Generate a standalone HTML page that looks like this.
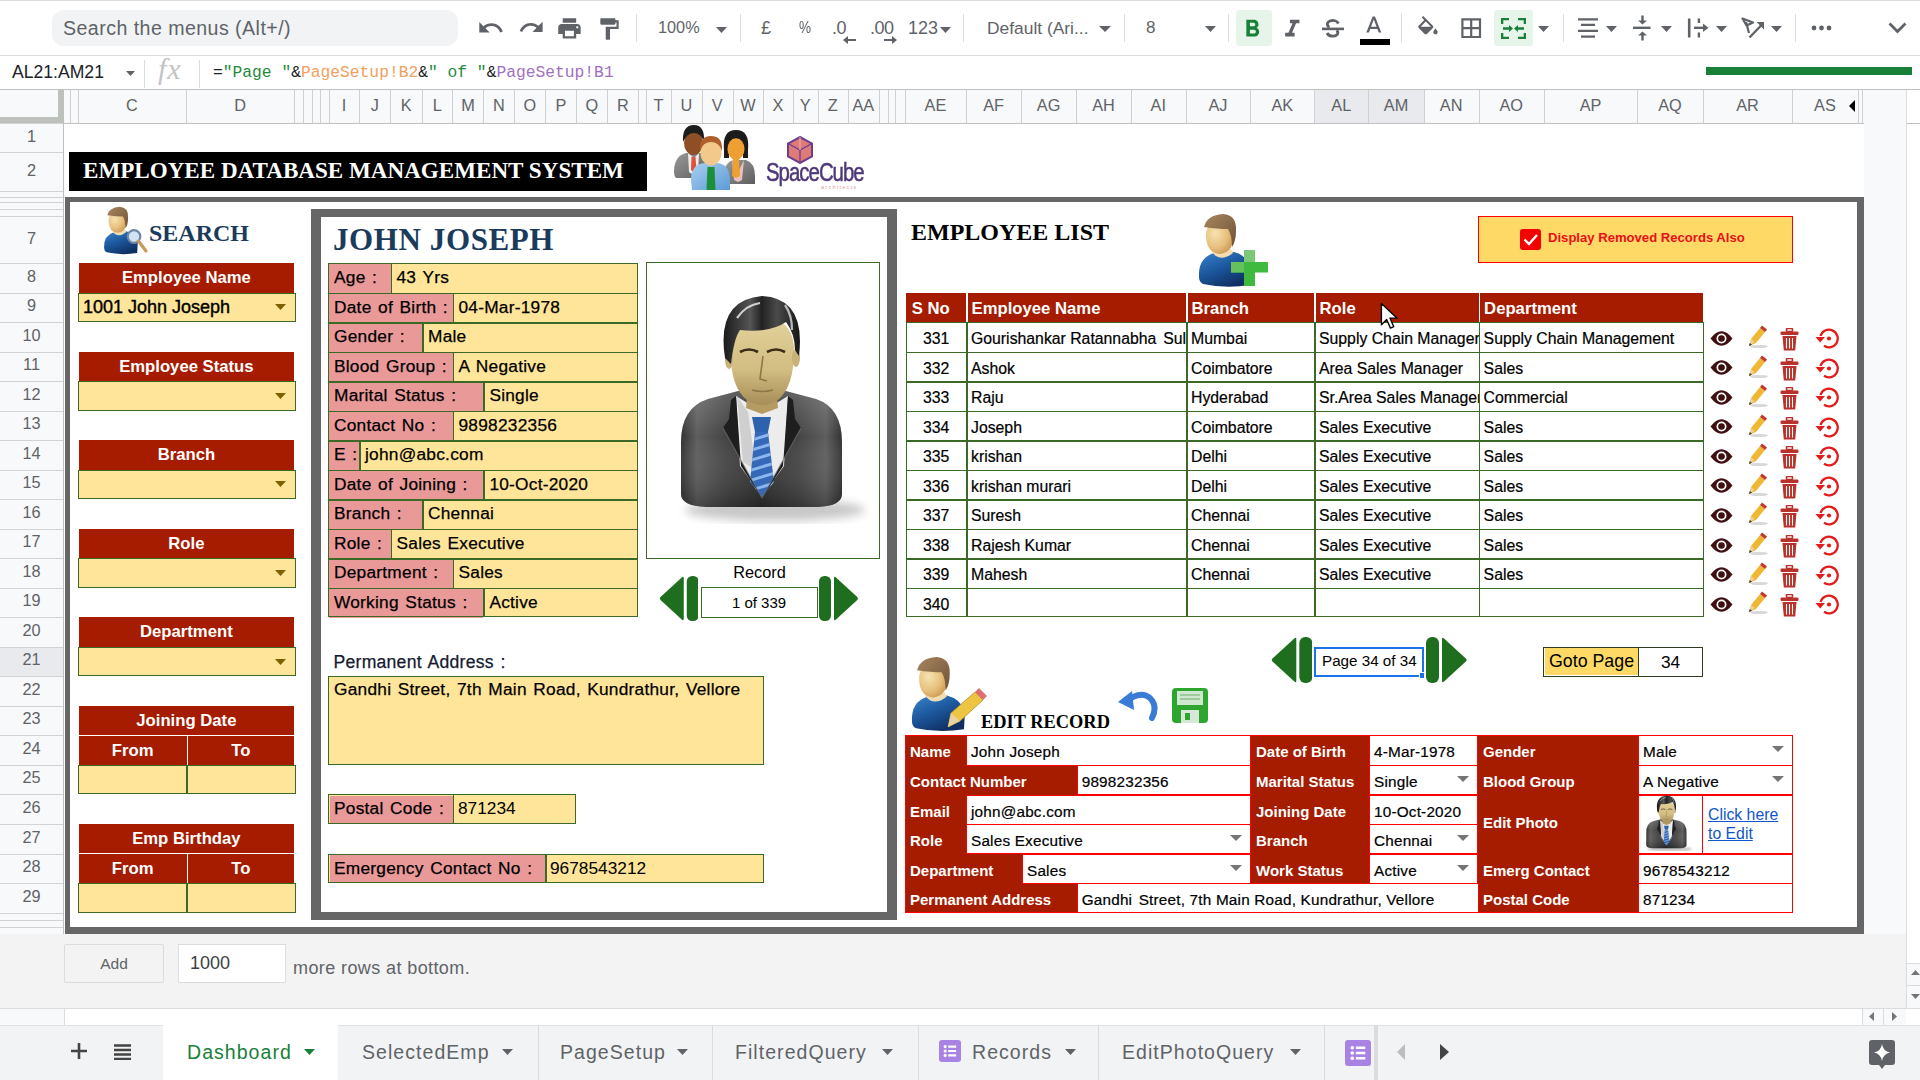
<!DOCTYPE html><html><head><meta charset="utf-8"><style>
html,body{margin:0;padding:0;}
body{width:1920px;height:1080px;overflow:hidden;position:relative;background:#fff;font-family:"Liberation Sans",sans-serif;color:#000;}
div,svg{position:absolute;box-sizing:border-box;}
.t{white-space:nowrap;overflow:visible;}
.serif{font-family:'Liberation Serif',serif;font-weight:bold;}
.mono{font-family:"Liberation Mono",monospace;}
</style></head><body>
<div style="left:0px;top:0px;width:1920px;height:1px;background:#dadce0"></div>
<div style="left:0px;top:55px;width:1920px;height:1px;background:#dadce0"></div>
<div style="left:52px;top:10px;width:406px;height:36px;background:#f1f3f4;border-radius:12px"></div>
<div class="t" style="left:63px;top:10px;height:36px;line-height:36px;font-size:19.6px;color:#5f6368;letter-spacing:0.45px">Search the menus (Alt+/)</div>
<svg style="left:477.2px;top:14px;width:27.599999999999998px;height:27.599999999999998px" viewBox="0 0 24 24"><path d="M12.5 8c-2.65 0-5.05.99-6.9 2.6L2 7v9h9l-3.62-3.62c1.39-1.16 3.16-1.88 5.12-1.88 3.54 0 6.55 2.31 7.6 5.5l2.37-.78C21.08 11.03 17.15 8 12.5 8z" fill="#5f6368" fill-rule="nonzero"/></svg>
<svg style="left:517.7px;top:14.3px;width:26.880000000000003px;height:26.880000000000003px" viewBox="0 0 24 24"><path d="M18.4 10.6C16.55 8.99 14.15 8 11.5 8c-4.65 0-8.58 3.03-9.96 7.22L3.9 16c1.05-3.19 4.05-5.5 7.6-5.5 1.95 0 3.73.72 5.12 1.88L13 16h9V7l-3.6 3.6z" fill="#5f6368" fill-rule="nonzero"/></svg>
<svg style="left:556.2px;top:15px;width:26.880000000000003px;height:26.880000000000003px" viewBox="0 0 24 24"><path d="M19 8H5c-1.66 0-3 1.34-3 3v6h4v4h12v-4h4v-6c0-1.66-1.34-3-3-3zm-3 11H8v-5h8v5zm3-7c-.55 0-1-.45-1-1s.45-1 1-1 1 .45 1 1-.45 1-1 1zm-1-9H6v4h12V3z" fill="#5f6368" fill-rule="nonzero"/></svg>
<svg style="left:596.4px;top:16.2px;width:25.92px;height:25.92px" viewBox="0 0 24 24"><path d="M18 4V3c0-.55-.45-1-1-1H5c-.55 0-1 .45-1 1v4c0 .55.45 1 1 1h12c.55 0 1-.45 1-1V6h1v4H9v11c0 .55.45 1 1 1h2c.55 0 1-.45 1-1v-9h8V4h-3z" fill="#5f6368" fill-rule="nonzero"/></svg>
<div style="left:636px;top:14px;width:1px;height:28px;background:#dadce0"></div>
<div style="left:740px;top:14px;width:1px;height:28px;background:#dadce0"></div>
<div style="left:963px;top:14px;width:1px;height:28px;background:#dadce0"></div>
<div style="left:1124px;top:14px;width:1px;height:28px;background:#dadce0"></div>
<div style="left:1228px;top:14px;width:1px;height:28px;background:#dadce0"></div>
<div style="left:1401px;top:14px;width:1px;height:28px;background:#dadce0"></div>
<div style="left:1563px;top:14px;width:1px;height:28px;background:#dadce0"></div>
<div style="left:1795px;top:14px;width:1px;height:28px;background:#dadce0"></div>
<div class="t" style="left:658px;top:8.5px;height:36px;line-height:36px;font-size:16.3px;color:#5f6368">100%</div>
<svg style="left:716px;top:27px;width:11px;height:6px" viewBox="0 0 11 6" width="11" height="6"><path d="M0 0 H11 L5.5 6 Z" fill="#5f6368"/></svg>
<div class="t" style="left:761px;top:10px;height:36px;line-height:36px;font-size:18px;color:#5f6368">£</div>
<div class="t" style="left:799px;top:10px;height:36px;line-height:36px;font-size:17px;color:#5f6368"><span style="display:inline-block;transform:scaleX(0.8);transform-origin:left">%</span></div>
<div class="t" style="left:832px;top:10px;height:36px;line-height:36px;font-size:18px;color:#5f6368;letter-spacing:-0.5px">.0</div>
<svg style="left:843px;top:36px;width:13px;height:8px" viewBox="0 0 13 8" width="13" height="8"><path d="M0 4 L5 0 V3 H13 V5 H5 V8 Z" fill="#5f6368"/></svg>
<div class="t" style="left:870px;top:10px;height:36px;line-height:36px;font-size:18px;color:#5f6368;letter-spacing:-0.5px">.00</div>
<svg style="left:884px;top:36px;width:13px;height:8px" viewBox="0 0 13 8" width="13" height="8"><path d="M13 4 L8 0 V3 H0 V5 H8 V8 Z" fill="#5f6368"/></svg>
<div class="t" style="left:908px;top:10px;height:36px;line-height:36px;font-size:18px;color:#5f6368">123</div>
<svg style="left:940px;top:27px;width:11px;height:6px" viewBox="0 0 11 6" width="11" height="6"><path d="M0 0 H11 L5.5 6 Z" fill="#5f6368"/></svg>
<div class="t" style="left:987px;top:10px;height:36px;line-height:36px;font-size:17.4px;color:#5f6368">Default (Ari...</div>
<svg style="left:1099px;top:26px;width:12px;height:6px" viewBox="0 0 12 6" width="12" height="6"><path d="M0 0 H12 L6.0 6 Z" fill="#5f6368"/></svg>
<div class="t" style="left:1146px;top:10px;height:36px;line-height:36px;font-size:17px;color:#5f6368">8</div>
<svg style="left:1205px;top:26px;width:11px;height:6px" viewBox="0 0 11 6" width="11" height="6"><path d="M0 0 H11 L5.5 6 Z" fill="#5f6368"/></svg>
<div style="left:1236px;top:10px;width:36px;height:36px;background:#e6f4ea;border-radius:3px"></div>
<svg style="left:1237.5px;top:15.3px;width:28.56px;height:28.56px" viewBox="0 0 24 24"><path d="M15.6 10.79c.97-.67 1.65-1.77 1.65-2.79 0-2.26-1.75-4-4-4H7v14h7.04c2.09 0 3.71-1.7 3.71-3.79 0-1.52-.86-2.82-2.15-3.42zM10 6.5h3c.83 0 1.5.67 1.5 1.5s-.67 1.5-1.5 1.5h-3v-3zm3.5 9H10v-3h3.5c.83 0 1.5.67 1.5 1.5s-.67 1.5-1.5 1.5z" fill="#188038" fill-rule="nonzero"/></svg>
<svg style="left:1277.8px;top:15.2px;width:28.56px;height:28.56px" viewBox="0 0 24 24"><path d="M10 4v3h2.21l-3.42 8H6v3h8v-3h-2.21l3.42-8H18V4z" fill="#5f6368" fill-rule="nonzero"/></svg>
<svg style="left:1322px;top:19px;width:22px;height:19px" viewBox="0 0 22 19" width="22" height="19"><path d="M16.5 4.5 C15 1.5 11 1 8 2 C4.5 3.2 4.5 7 7.5 8.2" stroke="#5f6368" stroke-width="2.8" fill="none"/><path d="M14.5 11.5 C17 13 16 17 11.5 17.2 C8 17.4 6 16 5 14" stroke="#5f6368" stroke-width="2.8" fill="none"/><rect x="0" y="8.6" width="22" height="2.6" fill="#5f6368"/></svg>
<svg style="left:1359.5px;top:13px;width:27.599999999999998px;height:27.599999999999998px" viewBox="0 0 24 24"><path d="M11 3L5.5 17h2.25l1.12-3h6.25l1.12 3h2.25L13 3h-2zm-1.38 9L12 5.67 14.38 12H9.62z" fill="#5f6368" fill-rule="nonzero"/></svg>
<div style="left:1360px;top:39.4px;width:30px;height:5.6px;background:#000"></div>
<svg style="left:1415px;top:16.2px;width:25.92px;height:25.92px" viewBox="0 0 24 24"><path d="M16.56 8.94L7.62 0 6.21 1.41l2.38 2.38-5.15 5.15c-.59.59-.59 1.54 0 2.12l5.5 5.5c.29.29.68.44 1.06.44s.77-.15 1.06-.44l5.5-5.5c.59-.58.59-1.53 0-2.12zM5.21 10L10 5.21 14.79 10H5.21zM19 11.5s-2 2.17-2 3.5c0 1.1.9 2 2 2s2-.9 2-2c0-1.33-2-3.5-2-3.5z" fill="#5f6368" fill-rule="nonzero"/></svg>
<svg style="left:1457.9px;top:14.6px;width:26.400000000000002px;height:26.400000000000002px" viewBox="0 0 24 24"><path d="M3 3v18h18V3H3zm8 16H5v-6h6v6zm0-8H5V5h6v6zm8 8h-6v-6h6v6zm0-8h-6V5h6v6z" fill="#5f6368" fill-rule="nonzero"/></svg>
<div style="left:1494px;top:10px;width:39px;height:36px;background:#e6f4ea;border-radius:3px"></div>
<svg style="left:1501px;top:18px;width:25px;height:21px" viewBox="0 0 25 21" width="25" height="21"><path d="M1 6 V1 H8 M17 1 H24 V6 M1 15 V20 H8 M17 20 H24 V15" stroke="#188038" stroke-width="2.6" fill="none"/><path d="M2 10.5 H9 M23 10.5 H16" stroke="#188038" stroke-width="2.4"/><path d="M12 10.5 L8 7 V14 Z M13 10.5 L17 7 V14 Z" fill="#188038"/></svg>
<svg style="left:1538px;top:26px;width:11px;height:6px" viewBox="0 0 11 6" width="11" height="6"><path d="M0 0 H11 L5.5 6 Z" fill="#5f6368"/></svg>
<svg style="left:1578px;top:17px;width:20px;height:22px" viewBox="0 0 20 22" width="20" height="22"><path d="M0 2.4 H20 M3 7.9 H17 M0 13.9 H20 M3 19.6 H17" stroke="#5f6368" stroke-width="2.4"/></svg>
<svg style="left:1606px;top:26px;width:11px;height:6px" viewBox="0 0 11 6" width="11" height="6"><path d="M0 0 H11 L5.5 6 Z" fill="#5f6368"/></svg>
<svg style="left:1633px;top:15px;width:19px;height:26px" viewBox="0 0 19 26" width="19" height="26"><path d="M0 12.8 H17.5" stroke="#5f6368" stroke-width="2.4"/><path d="M9.5 0.5 V6" stroke="#5f6368" stroke-width="2.4"/><path d="M5 5.5 H14 L9.5 9.5 Z" fill="#5f6368"/><path d="M9.5 25.5 V20" stroke="#5f6368" stroke-width="2.4"/><path d="M5 20.5 H14 L9.5 16.5 Z" fill="#5f6368"/></svg>
<svg style="left:1661px;top:26px;width:11px;height:6px" viewBox="0 0 11 6" width="11" height="6"><path d="M0 0 H11 L5.5 6 Z" fill="#5f6368"/></svg>
<svg style="left:1686px;top:18px;width:23px;height:20px" viewBox="0 0 23 20" width="23" height="20"><path d="M3.2 0.5 V19.5" stroke="#5f6368" stroke-width="2.6"/><path d="M12.9 0.5 V5 M12.9 14.5 V19.5" stroke="#5f6368" stroke-width="2.4"/><path d="M8 9.8 H19" stroke="#5f6368" stroke-width="2.4"/><path d="M17 5.5 L22.5 9.8 L17 14 Z" fill="#5f6368"/></svg>
<svg style="left:1716px;top:26px;width:11px;height:6px" viewBox="0 0 11 6" width="11" height="6"><path d="M0 0 H11 L5.5 6 Z" fill="#5f6368"/></svg>
<svg style="left:1741px;top:17px;width:24px;height:22px" viewBox="0 0 24 22" width="24" height="22"><path d="M1.5 1.5 L12 5.5 L5.5 8.5 Z M5 5 L8 16" stroke="#5f6368" stroke-width="2.2" fill="none" stroke-linejoin="round"/><path d="M8.5 20.5 L21 7.5" stroke="#5f6368" stroke-width="2.4"/><path d="M15.5 5 H23 V12.5 Z" fill="#5f6368"/></svg>
<svg style="left:1771px;top:26px;width:11px;height:6px" viewBox="0 0 11 6" width="11" height="6"><path d="M0 0 H11 L5.5 6 Z" fill="#5f6368"/></svg>
<svg style="left:1811px;top:25px;width:21px;height:6px" viewBox="0 0 21 6" width="21" height="6"><circle cx="3" cy="3" r="2.4" fill="#5f6368"/><circle cx="10.5" cy="3" r="2.4" fill="#5f6368"/><circle cx="18" cy="3" r="2.4" fill="#5f6368"/></svg>
<svg style="left:1888px;top:22px;width:19px;height:12px" viewBox="0 0 19 12" width="19" height="12"><path d="M1.5 1.5 L9.5 9.5 L17.5 1.5" stroke="#5f6368" stroke-width="2.8" fill="none"/></svg>
<div style="left:0px;top:89px;width:1920px;height:1px;background:#c0c0c0"></div>
<div class="t" style="left:12px;top:56px;height:33px;line-height:33px;font-size:17.6px;color:#202124">AL21:AM21</div>
<svg style="left:126px;top:71px;width:9px;height:5px" viewBox="0 0 9 5" width="9" height="5"><path d="M0 0 H9 L4.5 5 Z" fill="#5f6368"/></svg>
<div style="left:144px;top:60px;width:1px;height:28px;background:#dadce0"></div>
<div class="t" style="left:158px;top:52px;height:34px;line-height:34px;font-family:'Liberation Serif',serif;font-size:30px;color:#c4c4c4;letter-spacing:1px"><i>fx</i></div>
<div style="left:199px;top:60px;width:1px;height:28px;background:#dadce0"></div>
<div class="t" style="left:213px;top:56px;height:33px;line-height:33px;font-family:'Liberation Mono',monospace;font-size:16.3px"><span style="color:#202124">=</span><span style="color:#1e8b3a">"Page "</span><span style="color:#202124">&amp;</span><span style="color:#f0a060">PageSetup!B2</span><span style="color:#202124">&amp;</span><span style="color:#1e8b3a">" of "</span><span style="color:#202124">&amp;</span><span style="color:#a070c0">PageSetup!B1</span></div>
<div style="left:1706px;top:67px;width:206px;height:8px;background:#188038"></div>
<div style="left:0px;top:90px;width:1864px;height:33px;background:#f8f9fa"></div>
<div style="left:0px;top:123px;width:1864px;height:1px;background:#c0c0c0"></div>
<div style="left:1314.2px;top:90px;width:109.39999999999986px;height:33px;background:#e8eaed"></div>
<div style="left:70px;top:90px;width:1px;height:33px;background:#d0d0d0"></div>
<div style="left:78px;top:90px;width:1px;height:33px;background:#d0d0d0"></div>
<div style="left:186px;top:90px;width:1px;height:33px;background:#d0d0d0"></div>
<div style="left:294px;top:90px;width:1px;height:33px;background:#d0d0d0"></div>
<div style="left:303px;top:90px;width:1px;height:33px;background:#d0d0d0"></div>
<div style="left:312px;top:90px;width:1px;height:33px;background:#d0d0d0"></div>
<div style="left:320px;top:90px;width:1px;height:33px;background:#d0d0d0"></div>
<div style="left:329px;top:90px;width:1px;height:33px;background:#d0d0d0"></div>
<div style="left:359px;top:90px;width:1px;height:33px;background:#d0d0d0"></div>
<div style="left:390px;top:90px;width:1px;height:33px;background:#d0d0d0"></div>
<div style="left:422px;top:90px;width:1px;height:33px;background:#d0d0d0"></div>
<div style="left:452px;top:90px;width:1px;height:33px;background:#d0d0d0"></div>
<div style="left:483px;top:90px;width:1px;height:33px;background:#d0d0d0"></div>
<div style="left:514px;top:90px;width:1px;height:33px;background:#d0d0d0"></div>
<div style="left:545px;top:90px;width:1px;height:33px;background:#d0d0d0"></div>
<div style="left:576px;top:90px;width:1px;height:33px;background:#d0d0d0"></div>
<div style="left:607px;top:90px;width:1px;height:33px;background:#d0d0d0"></div>
<div style="left:638px;top:90px;width:1px;height:33px;background:#d0d0d0"></div>
<div style="left:646px;top:90px;width:1px;height:33px;background:#d0d0d0"></div>
<div style="left:671px;top:90px;width:1px;height:33px;background:#d0d0d0"></div>
<div style="left:702px;top:90px;width:1px;height:33px;background:#d0d0d0"></div>
<div style="left:733px;top:90px;width:1px;height:33px;background:#d0d0d0"></div>
<div style="left:763px;top:90px;width:1px;height:33px;background:#d0d0d0"></div>
<div style="left:793px;top:90px;width:1px;height:33px;background:#d0d0d0"></div>
<div style="left:818px;top:90px;width:1px;height:33px;background:#d0d0d0"></div>
<div style="left:848px;top:90px;width:1px;height:33px;background:#d0d0d0"></div>
<div style="left:879px;top:90px;width:1px;height:33px;background:#d0d0d0"></div>
<div style="left:888px;top:90px;width:1px;height:33px;background:#d0d0d0"></div>
<div style="left:895px;top:90px;width:1px;height:33px;background:#d0d0d0"></div>
<div style="left:905px;top:90px;width:1px;height:33px;background:#d0d0d0"></div>
<div style="left:966px;top:90px;width:1px;height:33px;background:#d0d0d0"></div>
<div style="left:1021px;top:90px;width:1px;height:33px;background:#d0d0d0"></div>
<div style="left:1076px;top:90px;width:1px;height:33px;background:#d0d0d0"></div>
<div style="left:1131px;top:90px;width:1px;height:33px;background:#d0d0d0"></div>
<div style="left:1186px;top:90px;width:1px;height:33px;background:#d0d0d0"></div>
<div style="left:1250px;top:90px;width:1px;height:33px;background:#d0d0d0"></div>
<div style="left:1314px;top:90px;width:1px;height:33px;background:#d0d0d0"></div>
<div style="left:1368px;top:90px;width:1px;height:33px;background:#d0d0d0"></div>
<div style="left:1424px;top:90px;width:1px;height:33px;background:#d0d0d0"></div>
<div style="left:1479px;top:90px;width:1px;height:33px;background:#d0d0d0"></div>
<div style="left:1544px;top:90px;width:1px;height:33px;background:#d0d0d0"></div>
<div style="left:1637px;top:90px;width:1px;height:33px;background:#d0d0d0"></div>
<div style="left:1703px;top:90px;width:1px;height:33px;background:#d0d0d0"></div>
<div style="left:1792px;top:90px;width:1px;height:33px;background:#d0d0d0"></div>
<div style="left:1858px;top:90px;width:1px;height:33px;background:#d0d0d0"></div>
<div style="left:1864px;top:90px;width:1px;height:33px;background:#d0d0d0"></div>
<div class="t" style="left:78px;top:88.5px;width:108px;height:33px;line-height:33px;text-align:center;font-size:16.3px;color:#5f6368">C</div>
<div class="t" style="left:186px;top:88.5px;width:108.5px;height:33px;line-height:33px;text-align:center;font-size:16.3px;color:#5f6368">D</div>
<div class="t" style="left:329px;top:88.5px;width:30px;height:33px;line-height:33px;text-align:center;font-size:16.3px;color:#5f6368">I</div>
<div class="t" style="left:359px;top:88.5px;width:31.5px;height:33px;line-height:33px;text-align:center;font-size:16.3px;color:#5f6368">J</div>
<div class="t" style="left:390.5px;top:88.5px;width:31.5px;height:33px;line-height:33px;text-align:center;font-size:16.3px;color:#5f6368">K</div>
<div class="t" style="left:422px;top:88.5px;width:30.5px;height:33px;line-height:33px;text-align:center;font-size:16.3px;color:#5f6368">L</div>
<div class="t" style="left:452.5px;top:88.5px;width:30.899999999999977px;height:33px;line-height:33px;text-align:center;font-size:16.3px;color:#5f6368">M</div>
<div class="t" style="left:483.4px;top:88.5px;width:30.800000000000068px;height:33px;line-height:33px;text-align:center;font-size:16.3px;color:#5f6368">N</div>
<div class="t" style="left:514.2px;top:88.5px;width:31.199999999999932px;height:33px;line-height:33px;text-align:center;font-size:16.3px;color:#5f6368">O</div>
<div class="t" style="left:545.4px;top:88.5px;width:31.0px;height:33px;line-height:33px;text-align:center;font-size:16.3px;color:#5f6368">P</div>
<div class="t" style="left:576.4px;top:88.5px;width:31.0px;height:33px;line-height:33px;text-align:center;font-size:16.3px;color:#5f6368">Q</div>
<div class="t" style="left:607.4px;top:88.5px;width:31.0px;height:33px;line-height:33px;text-align:center;font-size:16.3px;color:#5f6368">R</div>
<div class="t" style="left:646.2px;top:88.5px;width:24.799999999999955px;height:33px;line-height:33px;text-align:center;font-size:16.3px;color:#5f6368">T</div>
<div class="t" style="left:671px;top:88.5px;width:30.700000000000045px;height:33px;line-height:33px;text-align:center;font-size:16.3px;color:#5f6368">U</div>
<div class="t" style="left:701.7px;top:88.5px;width:31.0px;height:33px;line-height:33px;text-align:center;font-size:16.3px;color:#5f6368">V</div>
<div class="t" style="left:732.7px;top:88.5px;width:30.699999999999932px;height:33px;line-height:33px;text-align:center;font-size:16.3px;color:#5f6368">W</div>
<div class="t" style="left:763.4px;top:88.5px;width:29.200000000000045px;height:33px;line-height:33px;text-align:center;font-size:16.3px;color:#5f6368">X</div>
<div class="t" style="left:792.6px;top:88.5px;width:25.0px;height:33px;line-height:33px;text-align:center;font-size:16.3px;color:#5f6368">Y</div>
<div class="t" style="left:817.6px;top:88.5px;width:30.399999999999977px;height:33px;line-height:33px;text-align:center;font-size:16.3px;color:#5f6368">Z</div>
<div class="t" style="left:848px;top:88.5px;width:30.75px;height:33px;line-height:33px;text-align:center;font-size:16.3px;color:#5f6368">AA</div>
<div class="t" style="left:904.8px;top:88.5px;width:61.200000000000045px;height:33px;line-height:33px;text-align:center;font-size:16.3px;color:#5f6368">AE</div>
<div class="t" style="left:966px;top:88.5px;width:55.25px;height:33px;line-height:33px;text-align:center;font-size:16.3px;color:#5f6368">AF</div>
<div class="t" style="left:1021.25px;top:88.5px;width:54.75px;height:33px;line-height:33px;text-align:center;font-size:16.3px;color:#5f6368">AG</div>
<div class="t" style="left:1076px;top:88.5px;width:54.90000000000009px;height:33px;line-height:33px;text-align:center;font-size:16.3px;color:#5f6368">AH</div>
<div class="t" style="left:1130.9px;top:88.5px;width:54.69999999999982px;height:33px;line-height:33px;text-align:center;font-size:16.3px;color:#5f6368">AI</div>
<div class="t" style="left:1185.6px;top:88.5px;width:64.80000000000018px;height:33px;line-height:33px;text-align:center;font-size:16.3px;color:#5f6368">AJ</div>
<div class="t" style="left:1250.4px;top:88.5px;width:63.799999999999955px;height:33px;line-height:33px;text-align:center;font-size:16.3px;color:#5f6368">AK</div>
<div class="t" style="left:1314.2px;top:88.5px;width:54.200000000000045px;height:33px;line-height:33px;text-align:center;font-size:16.3px;color:#5f6368">AL</div>
<div class="t" style="left:1368.4px;top:88.5px;width:55.19999999999982px;height:33px;line-height:33px;text-align:center;font-size:16.3px;color:#5f6368">AM</div>
<div class="t" style="left:1423.6px;top:88.5px;width:55.0px;height:33px;line-height:33px;text-align:center;font-size:16.3px;color:#5f6368">AN</div>
<div class="t" style="left:1478.6px;top:88.5px;width:65.10000000000014px;height:33px;line-height:33px;text-align:center;font-size:16.3px;color:#5f6368">AO</div>
<div class="t" style="left:1543.7px;top:88.5px;width:93.70000000000005px;height:33px;line-height:33px;text-align:center;font-size:16.3px;color:#5f6368">AP</div>
<div class="t" style="left:1637.4px;top:88.5px;width:65.19999999999982px;height:33px;line-height:33px;text-align:center;font-size:16.3px;color:#5f6368">AQ</div>
<div class="t" style="left:1702.6px;top:88.5px;width:89.80000000000018px;height:33px;line-height:33px;text-align:center;font-size:16.3px;color:#5f6368">AR</div>
<div class="t" style="left:1792.4px;top:88.5px;width:65.09999999999991px;height:33px;line-height:33px;text-align:center;font-size:16.3px;color:#5f6368">AS</div>
<svg style="left:1849px;top:100px;width:6px;height:12px" viewBox="0 0 6 12" width="6" height="12"><path d="M6 0 V12 L0 6 Z" fill="#000"/></svg>
<div style="left:0px;top:90px;width:64px;height:33px;background:#f8f9fa"></div>
<div style="left:58px;top:90px;width:6px;height:33px;background:#bdc1bc"></div>
<div style="left:0px;top:117px;width:64px;height:6px;background:#bdc1bc"></div>
<div style="left:1864px;top:90px;width:42px;height:918px;background:#f8f9fa"></div>
<div style="left:1906px;top:90px;width:1px;height:918px;background:#dadce0"></div>
<div style="left:1862px;top:90px;width:1px;height:33px;background:#d0d0d0"></div>
<div style="left:1907px;top:123px;width:13px;height:1px;background:#c0c0c0"></div>
<div style="left:0px;top:123px;width:64px;height:811px;background:#f8f9fa"></div>
<div style="left:63px;top:123px;width:1px;height:811px;background:#c0c0c0"></div>
<div style="left:0px;top:646.851px;width:63px;height:29.527000000000044px;background:#e8eaed"></div>
<div style="left:0px;top:123px;width:63px;height:1px;background:#d3d3d3"></div>
<div style="left:0px;top:152px;width:63px;height:1px;background:#d3d3d3"></div>
<div style="left:0px;top:191px;width:63px;height:1px;background:#d3d3d3"></div>
<div style="left:0px;top:197px;width:63px;height:1px;background:#d3d3d3"></div>
<div style="left:0px;top:202px;width:63px;height:1px;background:#d3d3d3"></div>
<div style="left:0px;top:209px;width:63px;height:1px;background:#d3d3d3"></div>
<div style="left:0px;top:216px;width:63px;height:1px;background:#d3d3d3"></div>
<div style="left:0px;top:263px;width:63px;height:1px;background:#d3d3d3"></div>
<div style="left:0px;top:293px;width:63px;height:1px;background:#d3d3d3"></div>
<div style="left:0px;top:322px;width:63px;height:1px;background:#d3d3d3"></div>
<div style="left:0px;top:352px;width:63px;height:1px;background:#d3d3d3"></div>
<div style="left:0px;top:381px;width:63px;height:1px;background:#d3d3d3"></div>
<div style="left:0px;top:411px;width:63px;height:1px;background:#d3d3d3"></div>
<div style="left:0px;top:440px;width:63px;height:1px;background:#d3d3d3"></div>
<div style="left:0px;top:470px;width:63px;height:1px;background:#d3d3d3"></div>
<div style="left:0px;top:499px;width:63px;height:1px;background:#d3d3d3"></div>
<div style="left:0px;top:529px;width:63px;height:1px;background:#d3d3d3"></div>
<div style="left:0px;top:558px;width:63px;height:1px;background:#d3d3d3"></div>
<div style="left:0px;top:588px;width:63px;height:1px;background:#d3d3d3"></div>
<div style="left:0px;top:617px;width:63px;height:1px;background:#d3d3d3"></div>
<div style="left:0px;top:647px;width:63px;height:1px;background:#d3d3d3"></div>
<div style="left:0px;top:676px;width:63px;height:1px;background:#d3d3d3"></div>
<div style="left:0px;top:706px;width:63px;height:1px;background:#d3d3d3"></div>
<div style="left:0px;top:735px;width:63px;height:1px;background:#d3d3d3"></div>
<div style="left:0px;top:765px;width:63px;height:1px;background:#d3d3d3"></div>
<div style="left:0px;top:794px;width:63px;height:1px;background:#d3d3d3"></div>
<div style="left:0px;top:824px;width:63px;height:1px;background:#d3d3d3"></div>
<div style="left:0px;top:854px;width:63px;height:1px;background:#d3d3d3"></div>
<div style="left:0px;top:883px;width:63px;height:1px;background:#d3d3d3"></div>
<div style="left:0px;top:913px;width:63px;height:1px;background:#d3d3d3"></div>
<div style="left:0px;top:920px;width:63px;height:1px;background:#d3d3d3"></div>
<div style="left:0px;top:927px;width:63px;height:1px;background:#d3d3d3"></div>
<div class="t" style="left:0px;top:121.5px;width:63px;height:29px;line-height:29px;text-align:center;font-size:16.3px;color:#5f6368">1</div>
<div class="t" style="left:0px;top:150.5px;width:63px;height:39px;line-height:39px;text-align:center;font-size:16.3px;color:#5f6368">2</div>
<div class="t" style="left:0px;top:214.5px;width:63px;height:47.0px;line-height:47.0px;text-align:center;font-size:16.3px;color:#5f6368">7</div>
<div class="t" style="left:0px;top:261.5px;width:63px;height:29.526999999999987px;line-height:29.526999999999987px;text-align:center;font-size:16.3px;color:#5f6368">8</div>
<div class="t" style="left:0px;top:291.027px;width:63px;height:29.526999999999987px;line-height:29.526999999999987px;text-align:center;font-size:16.3px;color:#5f6368">9</div>
<div class="t" style="left:0px;top:320.554px;width:63px;height:29.527000000000044px;line-height:29.527000000000044px;text-align:center;font-size:16.3px;color:#5f6368">10</div>
<div class="t" style="left:0px;top:350.081px;width:63px;height:29.526999999999987px;line-height:29.526999999999987px;text-align:center;font-size:16.3px;color:#5f6368">11</div>
<div class="t" style="left:0px;top:379.608px;width:63px;height:29.526999999999987px;line-height:29.526999999999987px;text-align:center;font-size:16.3px;color:#5f6368">12</div>
<div class="t" style="left:0px;top:409.135px;width:63px;height:29.527000000000044px;line-height:29.527000000000044px;text-align:center;font-size:16.3px;color:#5f6368">13</div>
<div class="t" style="left:0px;top:438.66200000000003px;width:63px;height:29.526999999999987px;line-height:29.526999999999987px;text-align:center;font-size:16.3px;color:#5f6368">14</div>
<div class="t" style="left:0px;top:468.189px;width:63px;height:29.526999999999987px;line-height:29.526999999999987px;text-align:center;font-size:16.3px;color:#5f6368">15</div>
<div class="t" style="left:0px;top:497.716px;width:63px;height:29.52699999999993px;line-height:29.52699999999993px;text-align:center;font-size:16.3px;color:#5f6368">16</div>
<div class="t" style="left:0px;top:527.2429999999999px;width:63px;height:29.527000000000044px;line-height:29.527000000000044px;text-align:center;font-size:16.3px;color:#5f6368">17</div>
<div class="t" style="left:0px;top:556.77px;width:63px;height:29.527000000000044px;line-height:29.527000000000044px;text-align:center;font-size:16.3px;color:#5f6368">18</div>
<div class="t" style="left:0px;top:586.297px;width:63px;height:29.527000000000044px;line-height:29.527000000000044px;text-align:center;font-size:16.3px;color:#5f6368">19</div>
<div class="t" style="left:0px;top:615.8240000000001px;width:63px;height:29.52699999999993px;line-height:29.52699999999993px;text-align:center;font-size:16.3px;color:#5f6368">20</div>
<div class="t" style="left:0px;top:645.351px;width:63px;height:29.527000000000044px;line-height:29.527000000000044px;text-align:center;font-size:16.3px;color:#5f6368">21</div>
<div class="t" style="left:0px;top:674.878px;width:63px;height:29.52699999999993px;line-height:29.52699999999993px;text-align:center;font-size:16.3px;color:#5f6368">22</div>
<div class="t" style="left:0px;top:704.405px;width:63px;height:29.527000000000044px;line-height:29.527000000000044px;text-align:center;font-size:16.3px;color:#5f6368">23</div>
<div class="t" style="left:0px;top:733.932px;width:63px;height:29.527000000000044px;line-height:29.527000000000044px;text-align:center;font-size:16.3px;color:#5f6368">24</div>
<div class="t" style="left:0px;top:763.4590000000001px;width:63px;height:29.52699999999993px;line-height:29.52699999999993px;text-align:center;font-size:16.3px;color:#5f6368">25</div>
<div class="t" style="left:0px;top:792.986px;width:63px;height:29.527000000000044px;line-height:29.527000000000044px;text-align:center;font-size:16.3px;color:#5f6368">26</div>
<div class="t" style="left:0px;top:822.513px;width:63px;height:29.52699999999993px;line-height:29.52699999999993px;text-align:center;font-size:16.3px;color:#5f6368">27</div>
<div class="t" style="left:0px;top:852.04px;width:63px;height:29.527000000000044px;line-height:29.527000000000044px;text-align:center;font-size:16.3px;color:#5f6368">28</div>
<div class="t" style="left:0px;top:881.567px;width:63px;height:29.527000000000044px;line-height:29.527000000000044px;text-align:center;font-size:16.3px;color:#5f6368">29</div>
<div style="left:0px;top:934px;width:1906px;height:74px;background:#f3f3f3"></div>
<div style="left:0px;top:1008px;width:1920px;height:1px;background:#dadce0"></div>
<div style="left:0px;top:1009px;width:1920px;height:16px;background:#fff"></div>
<div style="left:0px;top:1009px;width:64px;height:16px;background:#f8f9fa"></div>
<div style="left:64px;top:1009px;width:1px;height:16px;background:#dadce0"></div>
<div style="left:64px;top:944px;width:100px;height:39px;background:#f3f3f3;border:1px solid #dadce0;border-radius:2px"></div>
<div class="t" style="left:64px;top:944px;height:39px;line-height:39px;font-size:15.5px;color:#5f6368"><span style="display:block;width:100px;text-align:center">Add</span></div>
<div style="left:178px;top:944px;width:108px;height:39px;background:#fff;border:1px solid #dadce0"></div>
<div class="t" style="left:190px;top:943.5px;height:39px;line-height:39px;font-size:18px;color:#3c4043">1000</div>
<div class="t" style="left:293px;top:949px;height:39px;line-height:39px;font-size:18px;letter-spacing:0.4px;color:#5f6368">more rows at bottom.</div>
<div style="left:1906px;top:963px;width:14px;height:45px;background:#f8f9fa;border-left:1px solid #dadce0;border-top:1px solid #dadce0"></div>
<div style="left:1906px;top:985px;width:14px;height:1px;background:#dadce0"></div>
<svg style="left:1911px;top:970px;width:9px;height:5px" viewBox="0 0 9 5" width="9" height="5"><path d="M0 5 L4.5 0 L9 5 Z" fill="#757575"/></svg>
<svg style="left:1911px;top:994px;width:9px;height:5px" viewBox="0 0 9 5" width="9" height="5"><path d="M0 0 L4.5 5 L9 0 Z" fill="#757575"/></svg>
<div style="left:1862px;top:1009px;width:44px;height:16px;background:#f8f9fa;border-left:1px solid #dadce0"></div>
<div style="left:1883px;top:1009px;width:1px;height:16px;background:#dadce0"></div>
<svg style="left:1869px;top:1012px;width:5px;height:9px" viewBox="0 0 5 9" width="5" height="9"><path d="M5 0 L0 4.5 L5 9 Z" fill="#757575"/></svg>
<svg style="left:1892px;top:1012px;width:5px;height:9px" viewBox="0 0 5 9" width="5" height="9"><path d="M0 0 L5 4.5 L0 9 Z" fill="#757575"/></svg>
<div style="left:0px;top:1025px;width:1920px;height:55px;background:#f1f3f4"></div>
<div style="left:0px;top:1025px;width:1920px;height:1px;background:#e0e0e0"></div>
<svg style="left:71px;top:1043px;width:16px;height:16px" viewBox="0 0 16 16" width="16" height="16"><path d="M8 0 V16 M0 8 H16" stroke="#444" stroke-width="2.6"/></svg>
<svg style="left:114px;top:1044px;width:17px;height:16px" viewBox="0 0 17 16" width="17" height="16"><path d="M0 1.5 H17 M0 6 H17 M0 10.5 H17 M0 15 H17" stroke="#444" stroke-width="2.4"/></svg>
<div style="left:163px;top:1025px;width:175px;height:55px;background:#fff"></div>
<div class="t" style="left:187px;top:1030px;height:44px;line-height:44px;font-size:19.5px;color:#188038;letter-spacing:1.05px">Dashboard</div>
<svg style="left:304px;top:1049px;width:11px;height:6px" viewBox="0 0 11 6" width="11" height="6"><path d="M0 0 H11 L5.5 6 Z" fill="#188038"/></svg>
<div class="t" style="left:362px;top:1030px;height:44px;line-height:44px;font-size:19.5px;color:#5f6368;letter-spacing:1.05px">SelectedEmp</div>
<svg style="left:502px;top:1049px;width:11px;height:6px" viewBox="0 0 11 6" width="11" height="6"><path d="M0 0 H11 L5.5 6 Z" fill="#5f6368"/></svg>
<div style="left:538px;top:1025px;width:1px;height:55px;background:#dadce0"></div>
<div class="t" style="left:560px;top:1030px;height:44px;line-height:44px;font-size:19.5px;color:#5f6368;letter-spacing:1.05px">PageSetup</div>
<svg style="left:677px;top:1049px;width:11px;height:6px" viewBox="0 0 11 6" width="11" height="6"><path d="M0 0 H11 L5.5 6 Z" fill="#5f6368"/></svg>
<div style="left:712px;top:1025px;width:1px;height:55px;background:#dadce0"></div>
<div class="t" style="left:735px;top:1030px;height:44px;line-height:44px;font-size:19.5px;color:#5f6368;letter-spacing:1.05px">FilteredQuery</div>
<svg style="left:882px;top:1049px;width:11px;height:6px" viewBox="0 0 11 6" width="11" height="6"><path d="M0 0 H11 L5.5 6 Z" fill="#5f6368"/></svg>
<div style="left:918px;top:1025px;width:1px;height:55px;background:#dadce0"></div>
<div class="t" style="left:972px;top:1030px;height:44px;line-height:44px;font-size:19.5px;color:#5f6368;letter-spacing:1.05px">Records</div>
<svg style="left:1065px;top:1049px;width:11px;height:6px" viewBox="0 0 11 6" width="11" height="6"><path d="M0 0 H11 L5.5 6 Z" fill="#5f6368"/></svg>
<div style="left:1098px;top:1025px;width:1px;height:55px;background:#dadce0"></div>
<div class="t" style="left:1122px;top:1030px;height:44px;line-height:44px;font-size:19.5px;color:#5f6368;letter-spacing:1.05px">EditPhotoQuery</div>
<svg style="left:1290px;top:1049px;width:11px;height:6px" viewBox="0 0 11 6" width="11" height="6"><path d="M0 0 H11 L5.5 6 Z" fill="#5f6368"/></svg>
<div style="left:1324px;top:1025px;width:1px;height:55px;background:#dadce0"></div>
<svg style="left:939px;top:1040px;width:22px;height:22px" viewBox="0 0 22 22" width="22" height="22"><rect x="0" y="0" width="22" height="22" rx="3" fill="#a983e4"/><circle cx="6.16" cy="6.6" r="1.54" fill="#fff"/><circle cx="6.16" cy="11.0" r="1.54" fill="#fff"/><circle cx="6.16" cy="15.399999999999999" r="1.54" fill="#fff"/><path d="M9.24 6.6 H17.16 M9.24 11.0 H17.16 M9.24 15.399999999999999 H17.16" stroke="#fff" stroke-width="2.2"/></svg>
<svg style="left:1345px;top:1040px;width:26px;height:26px" viewBox="0 0 26 26" width="26" height="26"><rect x="0" y="0" width="26" height="26" rx="3" fill="#a983e4"/><circle cx="7.280000000000001" cy="7.8" r="1.8200000000000003" fill="#fff"/><circle cx="7.280000000000001" cy="13.0" r="1.8200000000000003" fill="#fff"/><circle cx="7.280000000000001" cy="18.2" r="1.8200000000000003" fill="#fff"/><path d="M10.92 7.8 H20.28 M10.92 13.0 H20.28 M10.92 18.2 H20.28" stroke="#fff" stroke-width="2.6"/></svg>
<div style="left:1374px;top:1025px;width:4px;height:55px;background:#dcdcdc"></div>
<svg style="left:1397px;top:1044px;width:8px;height:16px" viewBox="0 0 8 16" width="8" height="16"><path d="M8 0 V16 L0 8 Z" fill="#bdbdbd"/></svg>
<svg style="left:1440px;top:1044px;width:9px;height:16px" viewBox="0 0 9 16" width="9" height="16"><path d="M0 0 V16 L9 8 Z" fill="#444"/></svg>
<svg style="left:1869px;top:1040px;width:26px;height:29px" viewBox="0 0 26 29" width="26" height="29"><rect x="0" y="0" width="26" height="25" rx="3" fill="#5f6368"/><path d="M10 25 L13 29 L16 25 Z" fill="#5f6368"/><path d="M13 4 Q14 11 21 12.5 Q14 14 13 21 Q12 14 5 12.5 Q12 11 13 4 Z" fill="#fff"/></svg>
<div style="left:69px;top:152px;width:578px;height:39px;background:#000"></div>
<div class="t" style="left:83px;top:151px;height:39px;line-height:39px;font-family:'Liberation Serif',serif;font-weight:bold;font-size:23.1px;color:#fff">EMPLOYEE DATABASE MANAGEMENT SYSTEM</div>
<div style="left:65px;top:197px;width:1799px;height:737px;border-style:solid;border-color:#666666;border-width:5px 7px 7px 5px;background:#fff"></div>
<div class="t" style="left:149px;top:209.5px;height:47px;line-height:47px;font-family:'Liberation Serif',serif;font-weight:bold;font-size:24px;color:#1b3b5c">SEARCH</div>
<div style="left:78.75px;top:263.0px;width:215.25px;height:29.526999999999987px;background:#a61c00"></div>
<div class="t" style="left:78.75px;top:263.0px;width:215.25px;height:29.526999999999987px;line-height:29.526999999999987px;text-align:center;font-weight:bold;font-size:16.7px;color:#fff;">Employee Name</div>
<div style="left:77.75px;top:292.527px;width:217.85000000000002px;height:29.526999999999987px;background:#ffe599;border:1.5px solid #3a6a26"></div>
<svg style="left:274.6px;top:304.29049999999995px;width:11px;height:6px" viewBox="0 0 11 6" width="11" height="6"><path d="M0 0 H11 L5.5 6 Z" fill="#7f6000"/></svg>
<div style="left:78.75px;top:351.581px;width:215.25px;height:29.526999999999987px;background:#a61c00"></div>
<div class="t" style="left:78.75px;top:351.581px;width:215.25px;height:29.526999999999987px;line-height:29.526999999999987px;text-align:center;font-weight:bold;font-size:16.7px;color:#fff;">Employee Status</div>
<div style="left:77.75px;top:381.108px;width:217.85000000000002px;height:29.526999999999987px;background:#ffe599;border:1.5px solid #3a6a26"></div>
<svg style="left:274.6px;top:392.87149999999997px;width:11px;height:6px" viewBox="0 0 11 6" width="11" height="6"><path d="M0 0 H11 L5.5 6 Z" fill="#7f6000"/></svg>
<div style="left:78.75px;top:440.16200000000003px;width:215.25px;height:29.526999999999987px;background:#a61c00"></div>
<div class="t" style="left:78.75px;top:440.16200000000003px;width:215.25px;height:29.526999999999987px;line-height:29.526999999999987px;text-align:center;font-weight:bold;font-size:16.7px;color:#fff;">Branch</div>
<div style="left:77.75px;top:469.689px;width:217.85000000000002px;height:29.526999999999987px;background:#ffe599;border:1.5px solid #3a6a26"></div>
<svg style="left:274.6px;top:481.4525px;width:11px;height:6px" viewBox="0 0 11 6" width="11" height="6"><path d="M0 0 H11 L5.5 6 Z" fill="#7f6000"/></svg>
<div style="left:78.75px;top:528.7429999999999px;width:215.25px;height:29.527000000000044px;background:#a61c00"></div>
<div class="t" style="left:78.75px;top:528.7429999999999px;width:215.25px;height:29.527000000000044px;line-height:29.527000000000044px;text-align:center;font-weight:bold;font-size:16.7px;color:#fff;">Role</div>
<div style="left:77.75px;top:558.27px;width:217.85000000000002px;height:29.527000000000044px;background:#ffe599;border:1.5px solid #3a6a26"></div>
<svg style="left:274.6px;top:570.0335px;width:11px;height:6px" viewBox="0 0 11 6" width="11" height="6"><path d="M0 0 H11 L5.5 6 Z" fill="#7f6000"/></svg>
<div style="left:78.75px;top:617.3240000000001px;width:215.25px;height:29.52699999999993px;background:#a61c00"></div>
<div class="t" style="left:78.75px;top:617.3240000000001px;width:215.25px;height:29.52699999999993px;line-height:29.52699999999993px;text-align:center;font-weight:bold;font-size:16.7px;color:#fff;">Department</div>
<div style="left:77.75px;top:646.851px;width:217.85000000000002px;height:29.527000000000044px;background:#ffe599;border:1.5px solid #3a6a26"></div>
<svg style="left:274.6px;top:658.6145px;width:11px;height:6px" viewBox="0 0 11 6" width="11" height="6"><path d="M0 0 H11 L5.5 6 Z" fill="#7f6000"/></svg>
<div class="t" style="left:83px;top:292.527px;height:29.526999999999987px;line-height:29.526999999999987px;font-size:18px;color:#000;-webkit-text-stroke:0.4px #000">1001 John Joseph</div>
<div style="left:78.75px;top:705.905px;width:215.25px;height:29.527000000000044px;background:#a61c00"></div>
<div class="t" style="left:78.75px;top:705.905px;width:215.25px;height:29.527000000000044px;line-height:29.527000000000044px;text-align:center;font-weight:bold;font-size:16.7px;color:#fff;">Joining Date</div>
<div style="left:78.75px;top:734.932px;width:215.25px;height:1px;background:#fff"></div>
<div style="left:78.75px;top:735.932px;width:107.75px;height:29.027000000000044px;background:#a61c00"></div>
<div class="t" style="left:78.75px;top:735.932px;width:107.75px;height:29.027000000000044px;line-height:29.027000000000044px;text-align:center;font-weight:bold;font-size:16.7px;color:#fff;">From</div>
<div style="left:187.5px;top:735.932px;width:106.5px;height:29.027000000000044px;background:#a61c00"></div>
<div class="t" style="left:187.5px;top:735.932px;width:106.5px;height:29.027000000000044px;line-height:29.027000000000044px;text-align:center;font-weight:bold;font-size:16.7px;color:#fff;">To</div>
<div style="left:77.75px;top:764.9590000000001px;width:217.85000000000002px;height:29.52699999999993px;background:#ffe599;border:1.5px solid #3a6a26"></div>
<div style="left:186px;top:764.9590000000001px;width:1.5px;height:29.52699999999993px;background:#3a6a26"></div>
<div style="left:78.75px;top:824.013px;width:215.25px;height:29.52699999999993px;background:#a61c00"></div>
<div class="t" style="left:78.75px;top:824.013px;width:215.25px;height:29.52699999999993px;line-height:29.52699999999993px;text-align:center;font-weight:bold;font-size:16.7px;color:#fff;">Emp Birthday</div>
<div style="left:78.75px;top:853.04px;width:215.25px;height:1px;background:#fff"></div>
<div style="left:78.75px;top:854.04px;width:107.75px;height:29.027000000000044px;background:#a61c00"></div>
<div class="t" style="left:78.75px;top:854.04px;width:107.75px;height:29.027000000000044px;line-height:29.027000000000044px;text-align:center;font-weight:bold;font-size:16.7px;color:#fff;">From</div>
<div style="left:187.5px;top:854.04px;width:106.5px;height:29.027000000000044px;background:#a61c00"></div>
<div class="t" style="left:187.5px;top:854.04px;width:106.5px;height:29.027000000000044px;line-height:29.027000000000044px;text-align:center;font-weight:bold;font-size:16.7px;color:#fff;">To</div>
<div style="left:77.75px;top:883.067px;width:217.85000000000002px;height:29.527000000000044px;background:#ffe599;border:1.5px solid #3a6a26"></div>
<div style="left:186px;top:883.067px;width:1.5px;height:29.527000000000044px;background:#3a6a26"></div>
<div style="left:311px;top:209px;width:586px;height:711px;border-style:solid;border-color:#666666;border-width:8px 10px 8px 10px"></div>
<div class="t" style="left:333px;top:216px;height:47px;line-height:47px;font-family:'Liberation Serif',serif;font-weight:bold;font-size:31px;letter-spacing:0.6px;color:#1b3b5c">JOHN JOSEPH</div>
<div style="left:328px;top:263.0px;width:310.4px;height:354.32400000000007px;background:#ffe599;border:1.5px solid #3a6a26"></div>
<div style="left:329px;top:263.5px;width:61.5px;height:29.526999999999987px;background:#ea9999"></div>
<div style="left:390.5px;top:263.0px;width:1.5px;height:29.526999999999987px;background:#3a6a26"></div>
<div class="t" style="left:334px;top:263.0px;height:29.526999999999987px;line-height:29.526999999999987px;font-size:17.3px;color:#000;letter-spacing:0.25px;word-spacing:1.5px;-webkit-text-stroke:0.25px #000">Age :</div>
<div class="t" style="left:396.5px;top:263.0px;height:29.526999999999987px;line-height:29.526999999999987px;font-size:17.3px;color:#000;letter-spacing:0.25px;word-spacing:1.5px;-webkit-text-stroke:0.25px #000">43 Yrs</div>
<div style="left:329px;top:293.027px;width:123.5px;height:29.526999999999987px;background:#ea9999"></div>
<div style="left:452.5px;top:292.527px;width:1.5px;height:29.526999999999987px;background:#3a6a26"></div>
<div style="left:328px;top:292.527px;width:310.4px;height:1.5px;background:#3a6a26"></div>
<div class="t" style="left:334px;top:292.527px;height:29.526999999999987px;line-height:29.526999999999987px;font-size:17.3px;color:#000;letter-spacing:0.25px;word-spacing:1.5px;-webkit-text-stroke:0.25px #000">Date of Birth :</div>
<div class="t" style="left:458.5px;top:292.527px;height:29.526999999999987px;line-height:29.526999999999987px;font-size:17.3px;color:#000;letter-spacing:0.25px;word-spacing:1.5px;-webkit-text-stroke:0.25px #000">04-Mar-1978</div>
<div style="left:329px;top:322.554px;width:93px;height:29.527000000000044px;background:#ea9999"></div>
<div style="left:422px;top:322.054px;width:1.5px;height:29.527000000000044px;background:#3a6a26"></div>
<div style="left:328px;top:322.054px;width:310.4px;height:1.5px;background:#3a6a26"></div>
<div class="t" style="left:334px;top:322.054px;height:29.527000000000044px;line-height:29.527000000000044px;font-size:17.3px;color:#000;letter-spacing:0.25px;word-spacing:1.5px;-webkit-text-stroke:0.25px #000">Gender :</div>
<div class="t" style="left:428px;top:322.054px;height:29.527000000000044px;line-height:29.527000000000044px;font-size:17.3px;color:#000;letter-spacing:0.25px;word-spacing:1.5px;-webkit-text-stroke:0.25px #000">Male</div>
<div style="left:329px;top:352.081px;width:123.5px;height:29.526999999999987px;background:#ea9999"></div>
<div style="left:452.5px;top:351.581px;width:1.5px;height:29.526999999999987px;background:#3a6a26"></div>
<div style="left:328px;top:351.581px;width:310.4px;height:1.5px;background:#3a6a26"></div>
<div class="t" style="left:334px;top:351.581px;height:29.526999999999987px;line-height:29.526999999999987px;font-size:17.3px;color:#000;letter-spacing:0.25px;word-spacing:1.5px;-webkit-text-stroke:0.25px #000">Blood Group :</div>
<div class="t" style="left:458.5px;top:351.581px;height:29.526999999999987px;line-height:29.526999999999987px;font-size:17.3px;color:#000;letter-spacing:0.25px;word-spacing:1.5px;-webkit-text-stroke:0.25px #000">A Negative</div>
<div style="left:329px;top:381.608px;width:154.39999999999998px;height:29.526999999999987px;background:#ea9999"></div>
<div style="left:483.4px;top:381.108px;width:1.5px;height:29.526999999999987px;background:#3a6a26"></div>
<div style="left:328px;top:381.108px;width:310.4px;height:1.5px;background:#3a6a26"></div>
<div class="t" style="left:334px;top:381.108px;height:29.526999999999987px;line-height:29.526999999999987px;font-size:17.3px;color:#000;letter-spacing:0.25px;word-spacing:1.5px;-webkit-text-stroke:0.25px #000">Marital Status :</div>
<div class="t" style="left:489.4px;top:381.108px;height:29.526999999999987px;line-height:29.526999999999987px;font-size:17.3px;color:#000;letter-spacing:0.25px;word-spacing:1.5px;-webkit-text-stroke:0.25px #000">Single</div>
<div style="left:329px;top:411.135px;width:123.5px;height:29.527000000000044px;background:#ea9999"></div>
<div style="left:452.5px;top:410.635px;width:1.5px;height:29.527000000000044px;background:#3a6a26"></div>
<div style="left:328px;top:410.635px;width:310.4px;height:1.5px;background:#3a6a26"></div>
<div class="t" style="left:334px;top:410.635px;height:29.527000000000044px;line-height:29.527000000000044px;font-size:17.3px;color:#000;letter-spacing:0.25px;word-spacing:1.5px;-webkit-text-stroke:0.25px #000">Contact No :</div>
<div class="t" style="left:458.5px;top:410.635px;height:29.527000000000044px;line-height:29.527000000000044px;font-size:17.3px;color:#000;letter-spacing:0.25px;word-spacing:1.5px;-webkit-text-stroke:0.25px #000">9898232356</div>
<div style="left:329px;top:440.66200000000003px;width:30px;height:29.526999999999987px;background:#ea9999"></div>
<div style="left:359px;top:440.16200000000003px;width:1.5px;height:29.526999999999987px;background:#3a6a26"></div>
<div style="left:328px;top:440.16200000000003px;width:310.4px;height:1.5px;background:#3a6a26"></div>
<div class="t" style="left:334px;top:440.16200000000003px;height:29.526999999999987px;line-height:29.526999999999987px;font-size:17.3px;color:#000;letter-spacing:0.25px;word-spacing:1.5px;-webkit-text-stroke:0.25px #000">E :</div>
<div class="t" style="left:365px;top:440.16200000000003px;height:29.526999999999987px;line-height:29.526999999999987px;font-size:17.3px;color:#000;letter-spacing:0.25px;word-spacing:1.5px;-webkit-text-stroke:0.25px #000">john@abc.com</div>
<div style="left:329px;top:470.189px;width:154.39999999999998px;height:29.526999999999987px;background:#ea9999"></div>
<div style="left:483.4px;top:469.689px;width:1.5px;height:29.526999999999987px;background:#3a6a26"></div>
<div style="left:328px;top:469.689px;width:310.4px;height:1.5px;background:#3a6a26"></div>
<div class="t" style="left:334px;top:469.689px;height:29.526999999999987px;line-height:29.526999999999987px;font-size:17.3px;color:#000;letter-spacing:0.25px;word-spacing:1.5px;-webkit-text-stroke:0.25px #000">Date of Joining :</div>
<div class="t" style="left:489.4px;top:469.689px;height:29.526999999999987px;line-height:29.526999999999987px;font-size:17.3px;color:#000;letter-spacing:0.25px;word-spacing:1.5px;-webkit-text-stroke:0.25px #000">10-Oct-2020</div>
<div style="left:329px;top:499.716px;width:93px;height:29.52699999999993px;background:#ea9999"></div>
<div style="left:422px;top:499.216px;width:1.5px;height:29.52699999999993px;background:#3a6a26"></div>
<div style="left:328px;top:499.216px;width:310.4px;height:1.5px;background:#3a6a26"></div>
<div class="t" style="left:334px;top:499.216px;height:29.52699999999993px;line-height:29.52699999999993px;font-size:17.3px;color:#000;letter-spacing:0.25px;word-spacing:1.5px;-webkit-text-stroke:0.25px #000">Branch :</div>
<div class="t" style="left:428px;top:499.216px;height:29.52699999999993px;line-height:29.52699999999993px;font-size:17.3px;color:#000;letter-spacing:0.25px;word-spacing:1.5px;-webkit-text-stroke:0.25px #000">Chennai</div>
<div style="left:329px;top:529.2429999999999px;width:61.5px;height:29.527000000000044px;background:#ea9999"></div>
<div style="left:390.5px;top:528.7429999999999px;width:1.5px;height:29.527000000000044px;background:#3a6a26"></div>
<div style="left:328px;top:528.7429999999999px;width:310.4px;height:1.5px;background:#3a6a26"></div>
<div class="t" style="left:334px;top:528.7429999999999px;height:29.527000000000044px;line-height:29.527000000000044px;font-size:17.3px;color:#000;letter-spacing:0.25px;word-spacing:1.5px;-webkit-text-stroke:0.25px #000">Role :</div>
<div class="t" style="left:396.5px;top:528.7429999999999px;height:29.527000000000044px;line-height:29.527000000000044px;font-size:17.3px;color:#000;letter-spacing:0.25px;word-spacing:1.5px;-webkit-text-stroke:0.25px #000">Sales Executive</div>
<div style="left:329px;top:558.77px;width:123.5px;height:29.527000000000044px;background:#ea9999"></div>
<div style="left:452.5px;top:558.27px;width:1.5px;height:29.527000000000044px;background:#3a6a26"></div>
<div style="left:328px;top:558.27px;width:310.4px;height:1.5px;background:#3a6a26"></div>
<div class="t" style="left:334px;top:558.27px;height:29.527000000000044px;line-height:29.527000000000044px;font-size:17.3px;color:#000;letter-spacing:0.25px;word-spacing:1.5px;-webkit-text-stroke:0.25px #000">Department :</div>
<div class="t" style="left:458.5px;top:558.27px;height:29.527000000000044px;line-height:29.527000000000044px;font-size:17.3px;color:#000;letter-spacing:0.25px;word-spacing:1.5px;-webkit-text-stroke:0.25px #000">Sales</div>
<div style="left:329px;top:588.297px;width:154.39999999999998px;height:29.527000000000044px;background:#ea9999"></div>
<div style="left:483.4px;top:587.797px;width:1.5px;height:29.527000000000044px;background:#3a6a26"></div>
<div style="left:328px;top:587.797px;width:310.4px;height:1.5px;background:#3a6a26"></div>
<div class="t" style="left:334px;top:587.797px;height:29.527000000000044px;line-height:29.527000000000044px;font-size:17.3px;color:#000;letter-spacing:0.25px;word-spacing:1.5px;-webkit-text-stroke:0.25px #000">Working Status :</div>
<div class="t" style="left:489.4px;top:587.797px;height:29.527000000000044px;line-height:29.527000000000044px;font-size:17.3px;color:#000;letter-spacing:0.25px;word-spacing:1.5px;-webkit-text-stroke:0.25px #000">Active</div>
<div style="left:328px;top:263.0px;width:310.4px;height:354.32400000000007px;border:1.5px solid #3a6a26"></div>
<div style="left:646.25px;top:262px;width:233.5px;height:296.5px;border:1px solid #3a6a26"></div>
<div class="t" style="left:643px;top:558.27px;height:29.527000000000044px;line-height:29.527000000000044px;font-size:16.3px;color:#000"><span style="display:block;width:233px;text-align:center">Record</span></div>
<svg style="left:658.5px;top:575.5px;width:39.75px;height:45px" viewBox="0 0 39.75 45" width="39.75" height="45"><path d="M24.750000000000004 2 Q24.750000000000004 0 22.750000000000004 1.5 L1.5 21.0 Q0 22.5 1.5 24.0 L22.750000000000004 43.5 Q24.750000000000004 45 24.750000000000004 43 Z" fill="#1f6e1f"/><rect x="27.750000000000004" y="0" width="12" height="45" rx="5.454545454545454" fill="#1f6e1f"/></svg>
<div style="left:701px;top:587px;width:116.5px;height:31px;border:1.5px solid #3a6a26;background:#fff"></div>
<div class="t" style="left:701px;top:587px;height:31px;line-height:31px;font-size:15px;color:#000"><span style="display:block;width:116px;text-align:center">1 of 339</span></div>
<svg style="left:819.4px;top:575.5px;width:39.75px;height:45px" viewBox="0 0 39.75 45" width="39.75" height="45"><rect x="0" y="0" width="12" height="45" rx="5.454545454545454" fill="#1f6e1f"/><path d="M15 2 Q15 0 17 1.5 L38.25 21.0 Q39.75 22.5 38.25 24.0 L17 43.5 Q15 45 15 43 Z" fill="#1f6e1f"/></svg>
<div class="t" style="left:333.5px;top:648.351px;height:29.527000000000044px;line-height:29.527000000000044px;font-size:17.6px;color:#141a30;letter-spacing:0.25px;word-spacing:1.5px;-webkit-text-stroke:0.25px #141a30">Permanent Address :</div>
<div style="left:328px;top:676px;width:436px;height:89px;background:#ffe599;border:1.5px solid #3a6a26"></div>
<div class="t" style="left:334px;top:676px;height:26px;line-height:26px;font-size:17.3px;color:#000;letter-spacing:0.25px;word-spacing:1.5px;-webkit-text-stroke:0.25px #000">Gandhi Street, 7th Main Road, Kundrathur, Vellore</div>
<div style="left:328px;top:794.486px;width:248.4px;height:29.527000000000044px;background:#ffe599;border:1.5px solid #3a6a26"></div>
<div style="left:329.5px;top:795.986px;width:123px;height:26.527000000000044px;background:#ea9999"></div>
<div style="left:452.5px;top:794.486px;width:1.5px;height:29.527000000000044px;background:#3a6a26"></div>
<div class="t" style="left:334px;top:794.486px;height:29.527000000000044px;line-height:29.527000000000044px;font-size:17.3px;color:#000;letter-spacing:0.25px;word-spacing:1.5px;-webkit-text-stroke:0.25px #000">Postal Code :</div>
<div class="t" style="left:458px;top:794.486px;height:29.527000000000044px;line-height:29.527000000000044px;font-size:17.3px;color:#000">871234</div>
<div style="left:328px;top:853.54px;width:436px;height:29.527000000000044px;background:#ffe599;border:1.5px solid #3a6a26"></div>
<div style="left:329.5px;top:855.04px;width:216px;height:26.527000000000044px;background:#ea9999"></div>
<div style="left:545.4px;top:853.54px;width:1.5px;height:29.527000000000044px;background:#3a6a26"></div>
<div class="t" style="left:334px;top:853.54px;height:29.527000000000044px;line-height:29.527000000000044px;font-size:17.3px;color:#000;letter-spacing:0.25px;word-spacing:1.5px;-webkit-text-stroke:0.25px #000">Emergency Contact No :</div>
<div class="t" style="left:550px;top:853.54px;height:29.527000000000044px;line-height:29.527000000000044px;font-size:17.3px;color:#000">9678543212</div>
<div class="t" style="left:911px;top:209px;height:47px;line-height:47px;font-family:'Liberation Serif',serif;font-weight:bold;font-size:24px;color:#000">EMPLOYEE LIST</div>
<div style="left:1478px;top:215.7px;width:315px;height:47px;background:#ffd966;border:1.5px solid #ff0000"></div>
<svg style="left:1520px;top:229px;width:21px;height:21px" viewBox="0 0 21 21" width="21" height="21"><rect x="0" y="0" width="21" height="21" rx="3" fill="#f40000"/><path d="M4.5 10.5 L9 15 L17 6" stroke="#fff" stroke-width="2.4" fill="none"/></svg>
<div class="t" style="left:1548px;top:214.2px;height:47px;line-height:47px;font-size:13.1px;font-weight:bold;color:#e8101a">Display Removed Records Also</div>
<div style="left:906.25px;top:293px;width:796.3499999999999px;height:28.5px;background:#a61c00"></div>
<div class="t" style="left:911.75px;top:294.5px;height:28.5px;line-height:28.5px;font-weight:bold;font-size:16.7px;color:#fff">S No</div>
<div style="left:966px;top:293px;width:1.5px;height:28.5px;background:#fff"></div>
<div class="t" style="left:971.5px;top:294.5px;height:28.5px;line-height:28.5px;font-weight:bold;font-size:16.7px;color:#fff">Employee Name</div>
<div style="left:1186px;top:293px;width:1.5px;height:28.5px;background:#fff"></div>
<div class="t" style="left:1191.5px;top:294.5px;height:28.5px;line-height:28.5px;font-weight:bold;font-size:16.7px;color:#fff">Branch</div>
<div style="left:1314px;top:293px;width:1.5px;height:28.5px;background:#fff"></div>
<div class="t" style="left:1319.5px;top:294.5px;height:28.5px;line-height:28.5px;font-weight:bold;font-size:16.7px;color:#fff">Role</div>
<div style="left:1478.6px;top:293px;width:1.5px;height:28.5px;background:#fff"></div>
<div class="t" style="left:1484.1px;top:294.5px;height:28.5px;line-height:28.5px;font-weight:bold;font-size:16.7px;color:#fff">Department</div>
<div style="left:905.5px;top:321.5px;width:798.5999999999999px;height:295.5px;border:1.5px solid #3a6a26;background:#fff"></div>
<div class="t" style="left:906.25px;top:324.054px;width:59.75px;height:29.527000000000044px;line-height:29.527000000000044px;text-align:center;font-size:15.8px;-webkit-text-stroke:0.2px #000">331</div>
<div class="t" style="left:971px;top:324.054px;width:215px;height:27.527000000000044px;line-height:29.527000000000044px;overflow:hidden;font-size:15.8px;-webkit-text-stroke:0.2px #000">Gourishankar Ratannabha<span style="margin-left:2.5px"> </span>Sul</div>
<div class="t" style="left:1191px;top:324.054px;width:123px;height:27.527000000000044px;line-height:29.527000000000044px;overflow:hidden;font-size:15.8px;-webkit-text-stroke:0.2px #000">Mumbai</div>
<div class="t" style="left:1319px;top:324.054px;width:159.5999999999999px;height:27.527000000000044px;line-height:29.527000000000044px;overflow:hidden;font-size:15.8px;-webkit-text-stroke:0.2px #000">Supply Chain Manager</div>
<div class="t" style="left:1483.6px;top:324.054px;width:219.0px;height:27.527000000000044px;line-height:29.527000000000044px;overflow:hidden;font-size:15.8px;-webkit-text-stroke:0.2px #000">Supply Chain Management</div>
<div style="left:905.5px;top:351.581px;width:797.0999999999999px;height:1.5px;background:#3a6a26"></div>
<div class="t" style="left:906.25px;top:353.581px;width:59.75px;height:29.526999999999987px;line-height:29.526999999999987px;text-align:center;font-size:15.8px;-webkit-text-stroke:0.2px #000">332</div>
<div class="t" style="left:971px;top:353.581px;width:215px;height:27.526999999999987px;line-height:29.526999999999987px;overflow:hidden;font-size:15.8px;-webkit-text-stroke:0.2px #000">Ashok</div>
<div class="t" style="left:1191px;top:353.581px;width:123px;height:27.526999999999987px;line-height:29.526999999999987px;overflow:hidden;font-size:15.8px;-webkit-text-stroke:0.2px #000">Coimbatore</div>
<div class="t" style="left:1319px;top:353.581px;width:159.5999999999999px;height:27.526999999999987px;line-height:29.526999999999987px;overflow:hidden;font-size:15.8px;-webkit-text-stroke:0.2px #000">Area Sales Manager</div>
<div class="t" style="left:1483.6px;top:353.581px;width:219.0px;height:27.526999999999987px;line-height:29.526999999999987px;overflow:hidden;font-size:15.8px;-webkit-text-stroke:0.2px #000">Sales</div>
<div style="left:905.5px;top:381.108px;width:797.0999999999999px;height:1.5px;background:#3a6a26"></div>
<div class="t" style="left:906.25px;top:383.108px;width:59.75px;height:29.526999999999987px;line-height:29.526999999999987px;text-align:center;font-size:15.8px;-webkit-text-stroke:0.2px #000">333</div>
<div class="t" style="left:971px;top:383.108px;width:215px;height:27.526999999999987px;line-height:29.526999999999987px;overflow:hidden;font-size:15.8px;-webkit-text-stroke:0.2px #000">Raju</div>
<div class="t" style="left:1191px;top:383.108px;width:123px;height:27.526999999999987px;line-height:29.526999999999987px;overflow:hidden;font-size:15.8px;-webkit-text-stroke:0.2px #000">Hyderabad</div>
<div class="t" style="left:1319px;top:383.108px;width:159.5999999999999px;height:27.526999999999987px;line-height:29.526999999999987px;overflow:hidden;font-size:15.8px;-webkit-text-stroke:0.2px #000">Sr.Area Sales Manager</div>
<div class="t" style="left:1483.6px;top:383.108px;width:219.0px;height:27.526999999999987px;line-height:29.526999999999987px;overflow:hidden;font-size:15.8px;-webkit-text-stroke:0.2px #000">Commercial</div>
<div style="left:905.5px;top:410.635px;width:797.0999999999999px;height:1.5px;background:#3a6a26"></div>
<div class="t" style="left:906.25px;top:412.635px;width:59.75px;height:29.527000000000044px;line-height:29.527000000000044px;text-align:center;font-size:15.8px;-webkit-text-stroke:0.2px #000">334</div>
<div class="t" style="left:971px;top:412.635px;width:215px;height:27.527000000000044px;line-height:29.527000000000044px;overflow:hidden;font-size:15.8px;-webkit-text-stroke:0.2px #000">Joseph</div>
<div class="t" style="left:1191px;top:412.635px;width:123px;height:27.527000000000044px;line-height:29.527000000000044px;overflow:hidden;font-size:15.8px;-webkit-text-stroke:0.2px #000">Coimbatore</div>
<div class="t" style="left:1319px;top:412.635px;width:159.5999999999999px;height:27.527000000000044px;line-height:29.527000000000044px;overflow:hidden;font-size:15.8px;-webkit-text-stroke:0.2px #000">Sales Executive</div>
<div class="t" style="left:1483.6px;top:412.635px;width:219.0px;height:27.527000000000044px;line-height:29.527000000000044px;overflow:hidden;font-size:15.8px;-webkit-text-stroke:0.2px #000">Sales</div>
<div style="left:905.5px;top:440.16200000000003px;width:797.0999999999999px;height:1.5px;background:#3a6a26"></div>
<div class="t" style="left:906.25px;top:442.16200000000003px;width:59.75px;height:29.526999999999987px;line-height:29.526999999999987px;text-align:center;font-size:15.8px;-webkit-text-stroke:0.2px #000">335</div>
<div class="t" style="left:971px;top:442.16200000000003px;width:215px;height:27.526999999999987px;line-height:29.526999999999987px;overflow:hidden;font-size:15.8px;-webkit-text-stroke:0.2px #000">krishan</div>
<div class="t" style="left:1191px;top:442.16200000000003px;width:123px;height:27.526999999999987px;line-height:29.526999999999987px;overflow:hidden;font-size:15.8px;-webkit-text-stroke:0.2px #000">Delhi</div>
<div class="t" style="left:1319px;top:442.16200000000003px;width:159.5999999999999px;height:27.526999999999987px;line-height:29.526999999999987px;overflow:hidden;font-size:15.8px;-webkit-text-stroke:0.2px #000">Sales Executive</div>
<div class="t" style="left:1483.6px;top:442.16200000000003px;width:219.0px;height:27.526999999999987px;line-height:29.526999999999987px;overflow:hidden;font-size:15.8px;-webkit-text-stroke:0.2px #000">Sales</div>
<div style="left:905.5px;top:469.689px;width:797.0999999999999px;height:1.5px;background:#3a6a26"></div>
<div class="t" style="left:906.25px;top:471.689px;width:59.75px;height:29.526999999999987px;line-height:29.526999999999987px;text-align:center;font-size:15.8px;-webkit-text-stroke:0.2px #000">336</div>
<div class="t" style="left:971px;top:471.689px;width:215px;height:27.526999999999987px;line-height:29.526999999999987px;overflow:hidden;font-size:15.8px;-webkit-text-stroke:0.2px #000">krishan murari</div>
<div class="t" style="left:1191px;top:471.689px;width:123px;height:27.526999999999987px;line-height:29.526999999999987px;overflow:hidden;font-size:15.8px;-webkit-text-stroke:0.2px #000">Delhi</div>
<div class="t" style="left:1319px;top:471.689px;width:159.5999999999999px;height:27.526999999999987px;line-height:29.526999999999987px;overflow:hidden;font-size:15.8px;-webkit-text-stroke:0.2px #000">Sales Executive</div>
<div class="t" style="left:1483.6px;top:471.689px;width:219.0px;height:27.526999999999987px;line-height:29.526999999999987px;overflow:hidden;font-size:15.8px;-webkit-text-stroke:0.2px #000">Sales</div>
<div style="left:905.5px;top:499.216px;width:797.0999999999999px;height:1.5px;background:#3a6a26"></div>
<div class="t" style="left:906.25px;top:501.216px;width:59.75px;height:29.52699999999993px;line-height:29.52699999999993px;text-align:center;font-size:15.8px;-webkit-text-stroke:0.2px #000">337</div>
<div class="t" style="left:971px;top:501.216px;width:215px;height:27.52699999999993px;line-height:29.52699999999993px;overflow:hidden;font-size:15.8px;-webkit-text-stroke:0.2px #000">Suresh</div>
<div class="t" style="left:1191px;top:501.216px;width:123px;height:27.52699999999993px;line-height:29.52699999999993px;overflow:hidden;font-size:15.8px;-webkit-text-stroke:0.2px #000">Chennai</div>
<div class="t" style="left:1319px;top:501.216px;width:159.5999999999999px;height:27.52699999999993px;line-height:29.52699999999993px;overflow:hidden;font-size:15.8px;-webkit-text-stroke:0.2px #000">Sales Executive</div>
<div class="t" style="left:1483.6px;top:501.216px;width:219.0px;height:27.52699999999993px;line-height:29.52699999999993px;overflow:hidden;font-size:15.8px;-webkit-text-stroke:0.2px #000">Sales</div>
<div style="left:905.5px;top:528.7429999999999px;width:797.0999999999999px;height:1.5px;background:#3a6a26"></div>
<div class="t" style="left:906.25px;top:530.7429999999999px;width:59.75px;height:29.527000000000044px;line-height:29.527000000000044px;text-align:center;font-size:15.8px;-webkit-text-stroke:0.2px #000">338</div>
<div class="t" style="left:971px;top:530.7429999999999px;width:215px;height:27.527000000000044px;line-height:29.527000000000044px;overflow:hidden;font-size:15.8px;-webkit-text-stroke:0.2px #000">Rajesh Kumar</div>
<div class="t" style="left:1191px;top:530.7429999999999px;width:123px;height:27.527000000000044px;line-height:29.527000000000044px;overflow:hidden;font-size:15.8px;-webkit-text-stroke:0.2px #000">Chennai</div>
<div class="t" style="left:1319px;top:530.7429999999999px;width:159.5999999999999px;height:27.527000000000044px;line-height:29.527000000000044px;overflow:hidden;font-size:15.8px;-webkit-text-stroke:0.2px #000">Sales Executive</div>
<div class="t" style="left:1483.6px;top:530.7429999999999px;width:219.0px;height:27.527000000000044px;line-height:29.527000000000044px;overflow:hidden;font-size:15.8px;-webkit-text-stroke:0.2px #000">Sales</div>
<div style="left:905.5px;top:558.27px;width:797.0999999999999px;height:1.5px;background:#3a6a26"></div>
<div class="t" style="left:906.25px;top:560.27px;width:59.75px;height:29.527000000000044px;line-height:29.527000000000044px;text-align:center;font-size:15.8px;-webkit-text-stroke:0.2px #000">339</div>
<div class="t" style="left:971px;top:560.27px;width:215px;height:27.527000000000044px;line-height:29.527000000000044px;overflow:hidden;font-size:15.8px;-webkit-text-stroke:0.2px #000">Mahesh</div>
<div class="t" style="left:1191px;top:560.27px;width:123px;height:27.527000000000044px;line-height:29.527000000000044px;overflow:hidden;font-size:15.8px;-webkit-text-stroke:0.2px #000">Chennai</div>
<div class="t" style="left:1319px;top:560.27px;width:159.5999999999999px;height:27.527000000000044px;line-height:29.527000000000044px;overflow:hidden;font-size:15.8px;-webkit-text-stroke:0.2px #000">Sales Executive</div>
<div class="t" style="left:1483.6px;top:560.27px;width:219.0px;height:27.527000000000044px;line-height:29.527000000000044px;overflow:hidden;font-size:15.8px;-webkit-text-stroke:0.2px #000">Sales</div>
<div style="left:905.5px;top:587.797px;width:797.0999999999999px;height:1.5px;background:#3a6a26"></div>
<div class="t" style="left:906.25px;top:589.797px;width:59.75px;height:29.527000000000044px;line-height:29.527000000000044px;text-align:center;font-size:15.8px;-webkit-text-stroke:0.2px #000">340</div>
<div style="left:966px;top:321.5px;width:1.5px;height:295.5px;background:#3a6a26"></div>
<div style="left:1186px;top:321.5px;width:1.5px;height:295.5px;background:#3a6a26"></div>
<div style="left:1314px;top:321.5px;width:1.5px;height:295.5px;background:#3a6a26"></div>
<div style="left:1478.6px;top:321.5px;width:1.5px;height:295.5px;background:#3a6a26"></div>
<svg style="left:1710px;top:330.8175px;width:23px;height:15px" viewBox="0 0 23 15" width="23" height="15"><path d="M0.5 7.5 Q11.5 -7 22.5 7.5 Q11.5 22 0.5 7.5 Z" fill="#3f0f12"/><circle cx="11.5" cy="7.5" r="5" fill="#fff"/><circle cx="11.5" cy="7.5" r="3.3" fill="#3f0f12"/></svg>
<svg style="left:1746px;top:325.3175px;width:22px;height:24px" viewBox="0 0 22 24" width="22" height="24"><ellipse cx="13" cy="21.5" rx="9" ry="1.6" fill="#d8d8d8"/><path d="M3 21 L5 14 L14 3 L19 7 L10 18 Z" fill="#efb733"/><path d="M14 3 L16 0.5 L21 4.5 L19 7 Z" fill="#c0392b"/><path d="M3 21 L5 14 L8.5 17 Z" fill="#e8d3a0"/><path d="M3 21 L3.8 18 L6 19.8 Z" fill="#333"/></svg>
<svg style="left:1780px;top:328.3175px;width:19px;height:23px" viewBox="0 0 19 23" width="19" height="23"><rect x="6.5" y="0.5" width="6" height="3" rx="1" fill="none" stroke="#b8312a" stroke-width="1.6"/><rect x="0.5" y="3.5" width="18" height="3.5" rx="1.2" fill="#b8312a"/><path d="M2.5 8 H16.5 L15.2 22.5 H3.8 Z" fill="#b8312a"/><path d="M6.5 10 V20.5 M9.5 10 V20.5 M12.5 10 V20.5" stroke="#fff" stroke-width="1.1"/></svg>
<svg style="left:1815px;top:328.3175px;width:24px;height:21px" viewBox="0 0 24 21" width="24" height="21"><path d="M5.5 8 A8.8 8.8 0 1 1 9 17.8" stroke="#e21b1b" stroke-width="2.3" fill="none"/><path d="M0.5 9 H10 L5.2 14.5 Z" fill="#e21b1b"/><circle cx="14" cy="10.5" r="2.1" fill="#e21b1b"/></svg>
<svg style="left:1710px;top:360.34450000000004px;width:23px;height:15px" viewBox="0 0 23 15" width="23" height="15"><path d="M0.5 7.5 Q11.5 -7 22.5 7.5 Q11.5 22 0.5 7.5 Z" fill="#3f0f12"/><circle cx="11.5" cy="7.5" r="5" fill="#fff"/><circle cx="11.5" cy="7.5" r="3.3" fill="#3f0f12"/></svg>
<svg style="left:1746px;top:354.84450000000004px;width:22px;height:24px" viewBox="0 0 22 24" width="22" height="24"><ellipse cx="13" cy="21.5" rx="9" ry="1.6" fill="#d8d8d8"/><path d="M3 21 L5 14 L14 3 L19 7 L10 18 Z" fill="#efb733"/><path d="M14 3 L16 0.5 L21 4.5 L19 7 Z" fill="#c0392b"/><path d="M3 21 L5 14 L8.5 17 Z" fill="#e8d3a0"/><path d="M3 21 L3.8 18 L6 19.8 Z" fill="#333"/></svg>
<svg style="left:1780px;top:357.84450000000004px;width:19px;height:23px" viewBox="0 0 19 23" width="19" height="23"><rect x="6.5" y="0.5" width="6" height="3" rx="1" fill="none" stroke="#b8312a" stroke-width="1.6"/><rect x="0.5" y="3.5" width="18" height="3.5" rx="1.2" fill="#b8312a"/><path d="M2.5 8 H16.5 L15.2 22.5 H3.8 Z" fill="#b8312a"/><path d="M6.5 10 V20.5 M9.5 10 V20.5 M12.5 10 V20.5" stroke="#fff" stroke-width="1.1"/></svg>
<svg style="left:1815px;top:357.84450000000004px;width:24px;height:21px" viewBox="0 0 24 21" width="24" height="21"><path d="M5.5 8 A8.8 8.8 0 1 1 9 17.8" stroke="#e21b1b" stroke-width="2.3" fill="none"/><path d="M0.5 9 H10 L5.2 14.5 Z" fill="#e21b1b"/><circle cx="14" cy="10.5" r="2.1" fill="#e21b1b"/></svg>
<svg style="left:1710px;top:389.87149999999997px;width:23px;height:15px" viewBox="0 0 23 15" width="23" height="15"><path d="M0.5 7.5 Q11.5 -7 22.5 7.5 Q11.5 22 0.5 7.5 Z" fill="#3f0f12"/><circle cx="11.5" cy="7.5" r="5" fill="#fff"/><circle cx="11.5" cy="7.5" r="3.3" fill="#3f0f12"/></svg>
<svg style="left:1746px;top:384.37149999999997px;width:22px;height:24px" viewBox="0 0 22 24" width="22" height="24"><ellipse cx="13" cy="21.5" rx="9" ry="1.6" fill="#d8d8d8"/><path d="M3 21 L5 14 L14 3 L19 7 L10 18 Z" fill="#efb733"/><path d="M14 3 L16 0.5 L21 4.5 L19 7 Z" fill="#c0392b"/><path d="M3 21 L5 14 L8.5 17 Z" fill="#e8d3a0"/><path d="M3 21 L3.8 18 L6 19.8 Z" fill="#333"/></svg>
<svg style="left:1780px;top:387.37149999999997px;width:19px;height:23px" viewBox="0 0 19 23" width="19" height="23"><rect x="6.5" y="0.5" width="6" height="3" rx="1" fill="none" stroke="#b8312a" stroke-width="1.6"/><rect x="0.5" y="3.5" width="18" height="3.5" rx="1.2" fill="#b8312a"/><path d="M2.5 8 H16.5 L15.2 22.5 H3.8 Z" fill="#b8312a"/><path d="M6.5 10 V20.5 M9.5 10 V20.5 M12.5 10 V20.5" stroke="#fff" stroke-width="1.1"/></svg>
<svg style="left:1815px;top:387.37149999999997px;width:24px;height:21px" viewBox="0 0 24 21" width="24" height="21"><path d="M5.5 8 A8.8 8.8 0 1 1 9 17.8" stroke="#e21b1b" stroke-width="2.3" fill="none"/><path d="M0.5 9 H10 L5.2 14.5 Z" fill="#e21b1b"/><circle cx="14" cy="10.5" r="2.1" fill="#e21b1b"/></svg>
<svg style="left:1710px;top:419.3985px;width:23px;height:15px" viewBox="0 0 23 15" width="23" height="15"><path d="M0.5 7.5 Q11.5 -7 22.5 7.5 Q11.5 22 0.5 7.5 Z" fill="#3f0f12"/><circle cx="11.5" cy="7.5" r="5" fill="#fff"/><circle cx="11.5" cy="7.5" r="3.3" fill="#3f0f12"/></svg>
<svg style="left:1746px;top:413.8985px;width:22px;height:24px" viewBox="0 0 22 24" width="22" height="24"><ellipse cx="13" cy="21.5" rx="9" ry="1.6" fill="#d8d8d8"/><path d="M3 21 L5 14 L14 3 L19 7 L10 18 Z" fill="#efb733"/><path d="M14 3 L16 0.5 L21 4.5 L19 7 Z" fill="#c0392b"/><path d="M3 21 L5 14 L8.5 17 Z" fill="#e8d3a0"/><path d="M3 21 L3.8 18 L6 19.8 Z" fill="#333"/></svg>
<svg style="left:1780px;top:416.8985px;width:19px;height:23px" viewBox="0 0 19 23" width="19" height="23"><rect x="6.5" y="0.5" width="6" height="3" rx="1" fill="none" stroke="#b8312a" stroke-width="1.6"/><rect x="0.5" y="3.5" width="18" height="3.5" rx="1.2" fill="#b8312a"/><path d="M2.5 8 H16.5 L15.2 22.5 H3.8 Z" fill="#b8312a"/><path d="M6.5 10 V20.5 M9.5 10 V20.5 M12.5 10 V20.5" stroke="#fff" stroke-width="1.1"/></svg>
<svg style="left:1815px;top:416.8985px;width:24px;height:21px" viewBox="0 0 24 21" width="24" height="21"><path d="M5.5 8 A8.8 8.8 0 1 1 9 17.8" stroke="#e21b1b" stroke-width="2.3" fill="none"/><path d="M0.5 9 H10 L5.2 14.5 Z" fill="#e21b1b"/><circle cx="14" cy="10.5" r="2.1" fill="#e21b1b"/></svg>
<svg style="left:1710px;top:448.92550000000006px;width:23px;height:15px" viewBox="0 0 23 15" width="23" height="15"><path d="M0.5 7.5 Q11.5 -7 22.5 7.5 Q11.5 22 0.5 7.5 Z" fill="#3f0f12"/><circle cx="11.5" cy="7.5" r="5" fill="#fff"/><circle cx="11.5" cy="7.5" r="3.3" fill="#3f0f12"/></svg>
<svg style="left:1746px;top:443.42550000000006px;width:22px;height:24px" viewBox="0 0 22 24" width="22" height="24"><ellipse cx="13" cy="21.5" rx="9" ry="1.6" fill="#d8d8d8"/><path d="M3 21 L5 14 L14 3 L19 7 L10 18 Z" fill="#efb733"/><path d="M14 3 L16 0.5 L21 4.5 L19 7 Z" fill="#c0392b"/><path d="M3 21 L5 14 L8.5 17 Z" fill="#e8d3a0"/><path d="M3 21 L3.8 18 L6 19.8 Z" fill="#333"/></svg>
<svg style="left:1780px;top:446.42550000000006px;width:19px;height:23px" viewBox="0 0 19 23" width="19" height="23"><rect x="6.5" y="0.5" width="6" height="3" rx="1" fill="none" stroke="#b8312a" stroke-width="1.6"/><rect x="0.5" y="3.5" width="18" height="3.5" rx="1.2" fill="#b8312a"/><path d="M2.5 8 H16.5 L15.2 22.5 H3.8 Z" fill="#b8312a"/><path d="M6.5 10 V20.5 M9.5 10 V20.5 M12.5 10 V20.5" stroke="#fff" stroke-width="1.1"/></svg>
<svg style="left:1815px;top:446.42550000000006px;width:24px;height:21px" viewBox="0 0 24 21" width="24" height="21"><path d="M5.5 8 A8.8 8.8 0 1 1 9 17.8" stroke="#e21b1b" stroke-width="2.3" fill="none"/><path d="M0.5 9 H10 L5.2 14.5 Z" fill="#e21b1b"/><circle cx="14" cy="10.5" r="2.1" fill="#e21b1b"/></svg>
<svg style="left:1710px;top:478.4525px;width:23px;height:15px" viewBox="0 0 23 15" width="23" height="15"><path d="M0.5 7.5 Q11.5 -7 22.5 7.5 Q11.5 22 0.5 7.5 Z" fill="#3f0f12"/><circle cx="11.5" cy="7.5" r="5" fill="#fff"/><circle cx="11.5" cy="7.5" r="3.3" fill="#3f0f12"/></svg>
<svg style="left:1746px;top:472.9525px;width:22px;height:24px" viewBox="0 0 22 24" width="22" height="24"><ellipse cx="13" cy="21.5" rx="9" ry="1.6" fill="#d8d8d8"/><path d="M3 21 L5 14 L14 3 L19 7 L10 18 Z" fill="#efb733"/><path d="M14 3 L16 0.5 L21 4.5 L19 7 Z" fill="#c0392b"/><path d="M3 21 L5 14 L8.5 17 Z" fill="#e8d3a0"/><path d="M3 21 L3.8 18 L6 19.8 Z" fill="#333"/></svg>
<svg style="left:1780px;top:475.9525px;width:19px;height:23px" viewBox="0 0 19 23" width="19" height="23"><rect x="6.5" y="0.5" width="6" height="3" rx="1" fill="none" stroke="#b8312a" stroke-width="1.6"/><rect x="0.5" y="3.5" width="18" height="3.5" rx="1.2" fill="#b8312a"/><path d="M2.5 8 H16.5 L15.2 22.5 H3.8 Z" fill="#b8312a"/><path d="M6.5 10 V20.5 M9.5 10 V20.5 M12.5 10 V20.5" stroke="#fff" stroke-width="1.1"/></svg>
<svg style="left:1815px;top:475.9525px;width:24px;height:21px" viewBox="0 0 24 21" width="24" height="21"><path d="M5.5 8 A8.8 8.8 0 1 1 9 17.8" stroke="#e21b1b" stroke-width="2.3" fill="none"/><path d="M0.5 9 H10 L5.2 14.5 Z" fill="#e21b1b"/><circle cx="14" cy="10.5" r="2.1" fill="#e21b1b"/></svg>
<svg style="left:1710px;top:507.9794999999999px;width:23px;height:15px" viewBox="0 0 23 15" width="23" height="15"><path d="M0.5 7.5 Q11.5 -7 22.5 7.5 Q11.5 22 0.5 7.5 Z" fill="#3f0f12"/><circle cx="11.5" cy="7.5" r="5" fill="#fff"/><circle cx="11.5" cy="7.5" r="3.3" fill="#3f0f12"/></svg>
<svg style="left:1746px;top:502.4794999999999px;width:22px;height:24px" viewBox="0 0 22 24" width="22" height="24"><ellipse cx="13" cy="21.5" rx="9" ry="1.6" fill="#d8d8d8"/><path d="M3 21 L5 14 L14 3 L19 7 L10 18 Z" fill="#efb733"/><path d="M14 3 L16 0.5 L21 4.5 L19 7 Z" fill="#c0392b"/><path d="M3 21 L5 14 L8.5 17 Z" fill="#e8d3a0"/><path d="M3 21 L3.8 18 L6 19.8 Z" fill="#333"/></svg>
<svg style="left:1780px;top:505.4794999999999px;width:19px;height:23px" viewBox="0 0 19 23" width="19" height="23"><rect x="6.5" y="0.5" width="6" height="3" rx="1" fill="none" stroke="#b8312a" stroke-width="1.6"/><rect x="0.5" y="3.5" width="18" height="3.5" rx="1.2" fill="#b8312a"/><path d="M2.5 8 H16.5 L15.2 22.5 H3.8 Z" fill="#b8312a"/><path d="M6.5 10 V20.5 M9.5 10 V20.5 M12.5 10 V20.5" stroke="#fff" stroke-width="1.1"/></svg>
<svg style="left:1815px;top:505.4794999999999px;width:24px;height:21px" viewBox="0 0 24 21" width="24" height="21"><path d="M5.5 8 A8.8 8.8 0 1 1 9 17.8" stroke="#e21b1b" stroke-width="2.3" fill="none"/><path d="M0.5 9 H10 L5.2 14.5 Z" fill="#e21b1b"/><circle cx="14" cy="10.5" r="2.1" fill="#e21b1b"/></svg>
<svg style="left:1710px;top:537.5065px;width:23px;height:15px" viewBox="0 0 23 15" width="23" height="15"><path d="M0.5 7.5 Q11.5 -7 22.5 7.5 Q11.5 22 0.5 7.5 Z" fill="#3f0f12"/><circle cx="11.5" cy="7.5" r="5" fill="#fff"/><circle cx="11.5" cy="7.5" r="3.3" fill="#3f0f12"/></svg>
<svg style="left:1746px;top:532.0065px;width:22px;height:24px" viewBox="0 0 22 24" width="22" height="24"><ellipse cx="13" cy="21.5" rx="9" ry="1.6" fill="#d8d8d8"/><path d="M3 21 L5 14 L14 3 L19 7 L10 18 Z" fill="#efb733"/><path d="M14 3 L16 0.5 L21 4.5 L19 7 Z" fill="#c0392b"/><path d="M3 21 L5 14 L8.5 17 Z" fill="#e8d3a0"/><path d="M3 21 L3.8 18 L6 19.8 Z" fill="#333"/></svg>
<svg style="left:1780px;top:535.0065px;width:19px;height:23px" viewBox="0 0 19 23" width="19" height="23"><rect x="6.5" y="0.5" width="6" height="3" rx="1" fill="none" stroke="#b8312a" stroke-width="1.6"/><rect x="0.5" y="3.5" width="18" height="3.5" rx="1.2" fill="#b8312a"/><path d="M2.5 8 H16.5 L15.2 22.5 H3.8 Z" fill="#b8312a"/><path d="M6.5 10 V20.5 M9.5 10 V20.5 M12.5 10 V20.5" stroke="#fff" stroke-width="1.1"/></svg>
<svg style="left:1815px;top:535.0065px;width:24px;height:21px" viewBox="0 0 24 21" width="24" height="21"><path d="M5.5 8 A8.8 8.8 0 1 1 9 17.8" stroke="#e21b1b" stroke-width="2.3" fill="none"/><path d="M0.5 9 H10 L5.2 14.5 Z" fill="#e21b1b"/><circle cx="14" cy="10.5" r="2.1" fill="#e21b1b"/></svg>
<svg style="left:1710px;top:567.0335px;width:23px;height:15px" viewBox="0 0 23 15" width="23" height="15"><path d="M0.5 7.5 Q11.5 -7 22.5 7.5 Q11.5 22 0.5 7.5 Z" fill="#3f0f12"/><circle cx="11.5" cy="7.5" r="5" fill="#fff"/><circle cx="11.5" cy="7.5" r="3.3" fill="#3f0f12"/></svg>
<svg style="left:1746px;top:561.5335px;width:22px;height:24px" viewBox="0 0 22 24" width="22" height="24"><ellipse cx="13" cy="21.5" rx="9" ry="1.6" fill="#d8d8d8"/><path d="M3 21 L5 14 L14 3 L19 7 L10 18 Z" fill="#efb733"/><path d="M14 3 L16 0.5 L21 4.5 L19 7 Z" fill="#c0392b"/><path d="M3 21 L5 14 L8.5 17 Z" fill="#e8d3a0"/><path d="M3 21 L3.8 18 L6 19.8 Z" fill="#333"/></svg>
<svg style="left:1780px;top:564.5335px;width:19px;height:23px" viewBox="0 0 19 23" width="19" height="23"><rect x="6.5" y="0.5" width="6" height="3" rx="1" fill="none" stroke="#b8312a" stroke-width="1.6"/><rect x="0.5" y="3.5" width="18" height="3.5" rx="1.2" fill="#b8312a"/><path d="M2.5 8 H16.5 L15.2 22.5 H3.8 Z" fill="#b8312a"/><path d="M6.5 10 V20.5 M9.5 10 V20.5 M12.5 10 V20.5" stroke="#fff" stroke-width="1.1"/></svg>
<svg style="left:1815px;top:564.5335px;width:24px;height:21px" viewBox="0 0 24 21" width="24" height="21"><path d="M5.5 8 A8.8 8.8 0 1 1 9 17.8" stroke="#e21b1b" stroke-width="2.3" fill="none"/><path d="M0.5 9 H10 L5.2 14.5 Z" fill="#e21b1b"/><circle cx="14" cy="10.5" r="2.1" fill="#e21b1b"/></svg>
<svg style="left:1710px;top:596.5605px;width:23px;height:15px" viewBox="0 0 23 15" width="23" height="15"><path d="M0.5 7.5 Q11.5 -7 22.5 7.5 Q11.5 22 0.5 7.5 Z" fill="#3f0f12"/><circle cx="11.5" cy="7.5" r="5" fill="#fff"/><circle cx="11.5" cy="7.5" r="3.3" fill="#3f0f12"/></svg>
<svg style="left:1746px;top:591.0605px;width:22px;height:24px" viewBox="0 0 22 24" width="22" height="24"><ellipse cx="13" cy="21.5" rx="9" ry="1.6" fill="#d8d8d8"/><path d="M3 21 L5 14 L14 3 L19 7 L10 18 Z" fill="#efb733"/><path d="M14 3 L16 0.5 L21 4.5 L19 7 Z" fill="#c0392b"/><path d="M3 21 L5 14 L8.5 17 Z" fill="#e8d3a0"/><path d="M3 21 L3.8 18 L6 19.8 Z" fill="#333"/></svg>
<svg style="left:1780px;top:594.0605px;width:19px;height:23px" viewBox="0 0 19 23" width="19" height="23"><rect x="6.5" y="0.5" width="6" height="3" rx="1" fill="none" stroke="#b8312a" stroke-width="1.6"/><rect x="0.5" y="3.5" width="18" height="3.5" rx="1.2" fill="#b8312a"/><path d="M2.5 8 H16.5 L15.2 22.5 H3.8 Z" fill="#b8312a"/><path d="M6.5 10 V20.5 M9.5 10 V20.5 M12.5 10 V20.5" stroke="#fff" stroke-width="1.1"/></svg>
<svg style="left:1815px;top:594.0605px;width:24px;height:21px" viewBox="0 0 24 21" width="24" height="21"><path d="M5.5 8 A8.8 8.8 0 1 1 9 17.8" stroke="#e21b1b" stroke-width="2.3" fill="none"/><path d="M0.5 9 H10 L5.2 14.5 Z" fill="#e21b1b"/><circle cx="14" cy="10.5" r="2.1" fill="#e21b1b"/></svg>
<svg style="left:1380px;top:302px;width:18px;height:30px" viewBox="0 0 18 30" width="18" height="30"><path d="M1.5 1.5 V24 L7 18.5 L11 27.5 L14.5 26 L10.5 17 H18 Z" fill="#fff" stroke="#000" stroke-width="1.4" stroke-linejoin="round" transform="scale(0.95)"/></svg>
<svg style="left:1270.5px;top:637px;width:41.3px;height:46px" viewBox="0 0 41.3 46" width="41.3" height="46"><path d="M25.3 2 Q25.3 0 23.3 1.5 L1.5 21.5 Q0 23.0 1.5 24.5 L23.3 44.5 Q25.3 46 25.3 44 Z" fill="#1f6e1f"/><rect x="28.3" y="0" width="13" height="46" rx="5.909090909090908" fill="#1f6e1f"/></svg>
<div style="left:1314px;top:646.7px;width:110px;height:30px;border:2px solid #1a73e8;background:#fff"></div>
<div class="t" style="left:1322px;top:645.7px;height:30px;line-height:30px;font-size:15.2px;color:#000">Page 34 of 34</div>
<div style="left:1419px;top:672px;width:6px;height:7px;background:#1a73e8;border:1px solid #fff"></div>
<svg style="left:1426px;top:637px;width:41.3px;height:46px" viewBox="0 0 41.3 46" width="41.3" height="46"><rect x="0" y="0" width="13" height="46" rx="5.909090909090908" fill="#1f6e1f"/><path d="M16 2 Q16 0 18 1.5 L39.8 21.5 Q41.3 23.0 39.8 24.5 L18 44.5 Q16 46 16 44 Z" fill="#1f6e1f"/></svg>
<div style="left:1543px;top:646.7px;width:160px;height:30px;background:#fff;border:1.5px solid #2f3b22"></div>
<div style="left:1544.5px;top:648.2px;width:93.3px;height:27px;background:#ffd966"></div>
<div style="left:1637.8px;top:646.7px;width:1.5px;height:30px;background:#2f3b22"></div>
<div class="t" style="left:1549px;top:645.7px;height:30px;line-height:30px;font-size:17.8px;color:#000">Goto Page</div>
<div class="t" style="left:1638px;top:646.7px;width:65px;height:30px;line-height:30px;text-align:center;font-size:17.3px">34</div>
<div class="t" style="left:981px;top:702px;height:40px;line-height:40px;font-family:'Liberation Serif',serif;font-weight:bold;font-size:18.4px;color:#000">EDIT RECORD</div>
<div style="left:905px;top:735.2px;width:888px;height:177.5999999999999px;background:#a61c00;border:1.5px solid #ff0000"></div>
<div style="left:966px;top:735.2px;width:284.79999999999995px;height:30.399999999999977px;background:#fff;border:1.5px solid #ff0000"></div>
<div class="t" style="left:910px;top:737.2px;height:29.899999999999977px;line-height:29.899999999999977px;font-weight:bold;font-size:15px;color:#fff">Name</div>
<div class="t" style="left:971px;top:737.2px;height:29.899999999999977px;line-height:29.899999999999977px;font-size:15.3px;color:#000;letter-spacing:0.2px;-webkit-text-stroke:0.2px #000">John Joseph</div>
<div style="left:1076.7px;top:765.1px;width:174.0999999999999px;height:30.0px;background:#fff;border:1.5px solid #ff0000"></div>
<div class="t" style="left:910px;top:767.1px;height:29.5px;line-height:29.5px;font-weight:bold;font-size:15px;color:#fff">Contact Number</div>
<div class="t" style="left:1081.7px;top:767.1px;height:29.5px;line-height:29.5px;font-size:15.3px;color:#000;letter-spacing:0.2px;-webkit-text-stroke:0.2px #000">9898232356</div>
<div style="left:966px;top:794.6px;width:284.79999999999995px;height:30.0px;background:#fff;border:1.5px solid #ff0000"></div>
<div class="t" style="left:910px;top:796.6px;height:29.5px;line-height:29.5px;font-weight:bold;font-size:15px;color:#fff">Email</div>
<div class="t" style="left:971px;top:796.6px;height:29.5px;line-height:29.5px;font-size:15.3px;color:#000;letter-spacing:0.2px;-webkit-text-stroke:0.2px #000">john@abc.com</div>
<div style="left:966px;top:824.1px;width:284.79999999999995px;height:30.199999999999932px;background:#fff;border:1.5px solid #ff0000"></div>
<div class="t" style="left:910px;top:826.1px;height:29.699999999999932px;line-height:29.699999999999932px;font-weight:bold;font-size:15px;color:#fff">Role</div>
<div class="t" style="left:971px;top:826.1px;height:29.699999999999932px;line-height:29.699999999999932px;font-size:15.3px;color:#000;letter-spacing:0.2px;-webkit-text-stroke:0.2px #000">Sales Executive</div>
<svg style="left:1230px;top:834.95px;width:12px;height:6px" viewBox="0 0 12 6" width="12" height="6"><path d="M0 0 H12 L6.0 6 Z" fill="#757575"/></svg>
<div style="left:1022px;top:853.8px;width:228.79999999999995px;height:30.0px;background:#fff;border:1.5px solid #ff0000"></div>
<div class="t" style="left:910px;top:855.8px;height:29.5px;line-height:29.5px;font-weight:bold;font-size:15px;color:#fff">Department</div>
<div class="t" style="left:1027px;top:855.8px;height:29.5px;line-height:29.5px;font-size:15.3px;color:#000;letter-spacing:0.2px;-webkit-text-stroke:0.2px #000">Sales</div>
<svg style="left:1230px;top:864.55px;width:12px;height:6px" viewBox="0 0 12 6" width="12" height="6"><path d="M0 0 H12 L6.0 6 Z" fill="#757575"/></svg>
<div style="left:1076.7px;top:883.3px;width:402.29999999999995px;height:30.0px;background:#fff;border:1.5px solid #ff0000"></div>
<div class="t" style="left:910px;top:885.3px;height:29.5px;line-height:29.5px;font-weight:bold;font-size:15px;color:#fff">Permanent Address</div>
<div class="t" style="left:1081.7px;top:885.3px;height:29.5px;line-height:29.5px;font-size:15.3px;color:#000;letter-spacing:0.2px;-webkit-text-stroke:0.2px #000">Gandhi<span style="margin-left:2px"> </span>Street, 7th Main Road, Kundrathur, Vellore</div>
<div style="left:1369.3px;top:735.2px;width:109.20000000000005px;height:30.399999999999977px;background:#fff;border:1.5px solid #ff0000"></div>
<div class="t" style="left:1256px;top:737.2px;height:29.899999999999977px;line-height:29.899999999999977px;font-weight:bold;font-size:15px;color:#fff">Date of Birth</div>
<div class="t" style="left:1374px;top:737.2px;height:29.899999999999977px;line-height:29.899999999999977px;font-size:15.3px;color:#000;letter-spacing:0.2px;-webkit-text-stroke:0.2px #000">4-Mar-1978</div>
<div style="left:1369.3px;top:765.1px;width:109.20000000000005px;height:30.0px;background:#fff;border:1.5px solid #ff0000"></div>
<div class="t" style="left:1256px;top:767.1px;height:29.5px;line-height:29.5px;font-weight:bold;font-size:15px;color:#fff">Marital&nbsp;Status</div>
<div class="t" style="left:1374px;top:767.1px;height:29.5px;line-height:29.5px;font-size:15.3px;color:#000;letter-spacing:0.2px;-webkit-text-stroke:0.2px #000">Single</div>
<svg style="left:1457px;top:775.85px;width:12px;height:6px" viewBox="0 0 12 6" width="12" height="6"><path d="M0 0 H12 L6.0 6 Z" fill="#757575"/></svg>
<div style="left:1369.3px;top:794.6px;width:109.20000000000005px;height:30.0px;background:#fff;border:1.5px solid #ff0000"></div>
<div class="t" style="left:1256px;top:796.6px;height:29.5px;line-height:29.5px;font-weight:bold;font-size:15px;color:#fff">Joining Date</div>
<div class="t" style="left:1374px;top:796.6px;height:29.5px;line-height:29.5px;font-size:15.3px;color:#000;letter-spacing:0.2px;-webkit-text-stroke:0.2px #000">10-Oct-2020</div>
<div style="left:1369.3px;top:824.1px;width:109.20000000000005px;height:30.199999999999932px;background:#fff;border:1.5px solid #ff0000"></div>
<div class="t" style="left:1256px;top:826.1px;height:29.699999999999932px;line-height:29.699999999999932px;font-weight:bold;font-size:15px;color:#fff">Branch</div>
<div class="t" style="left:1374px;top:826.1px;height:29.699999999999932px;line-height:29.699999999999932px;font-size:15.3px;color:#000;letter-spacing:0.2px;-webkit-text-stroke:0.2px #000">Chennai</div>
<svg style="left:1457px;top:834.95px;width:12px;height:6px" viewBox="0 0 12 6" width="12" height="6"><path d="M0 0 H12 L6.0 6 Z" fill="#757575"/></svg>
<div style="left:1369.3px;top:853.8px;width:109.20000000000005px;height:30.0px;background:#fff;border:1.5px solid #ff0000"></div>
<div class="t" style="left:1256px;top:855.8px;height:29.5px;line-height:29.5px;font-weight:bold;font-size:15px;color:#fff">Work&nbsp;Status</div>
<div class="t" style="left:1374px;top:855.8px;height:29.5px;line-height:29.5px;font-size:15.3px;color:#000;letter-spacing:0.2px;-webkit-text-stroke:0.2px #000">Active</div>
<svg style="left:1457px;top:864.55px;width:12px;height:6px" viewBox="0 0 12 6" width="12" height="6"><path d="M0 0 H12 L6.0 6 Z" fill="#757575"/></svg>
<div style="left:1637.8px;top:735.2px;width:155.20000000000005px;height:30.399999999999977px;background:#fff;border:1.5px solid #ff0000"></div>
<div class="t" style="left:1483px;top:737.2px;height:29.899999999999977px;line-height:29.899999999999977px;font-weight:bold;font-size:15px;color:#fff">Gender</div>
<div class="t" style="left:1643px;top:737.2px;height:29.899999999999977px;line-height:29.899999999999977px;font-size:15.3px;color:#000;letter-spacing:0.2px;-webkit-text-stroke:0.2px #000">Male</div>
<svg style="left:1772px;top:746.1500000000001px;width:12px;height:6px" viewBox="0 0 12 6" width="12" height="6"><path d="M0 0 H12 L6.0 6 Z" fill="#757575"/></svg>
<div style="left:1637.8px;top:765.1px;width:155.20000000000005px;height:30.0px;background:#fff;border:1.5px solid #ff0000"></div>
<div class="t" style="left:1483px;top:767.1px;height:29.5px;line-height:29.5px;font-weight:bold;font-size:15px;color:#fff">Blood Group</div>
<div class="t" style="left:1643px;top:767.1px;height:29.5px;line-height:29.5px;font-size:15.3px;color:#000;letter-spacing:0.2px;-webkit-text-stroke:0.2px #000">A Negative</div>
<svg style="left:1772px;top:775.85px;width:12px;height:6px" viewBox="0 0 12 6" width="12" height="6"><path d="M0 0 H12 L6.0 6 Z" fill="#757575"/></svg>
<div style="left:1637.8px;top:794.6px;width:64.79999999999995px;height:59.69999999999993px;background:#fff;border:1.5px solid #ff0000"></div>
<div style="left:1702.1px;top:794.6px;width:90.90000000000009px;height:59.69999999999993px;background:#fff;border:1.5px solid #ff0000"></div>
<div class="t" style="left:1483px;top:793.1px;height:59.19999999999993px;line-height:59.19999999999993px;font-weight:bold;font-size:15px;color:#fff">Edit Photo</div>
<div style="left:1708px;top:806px;font-size:15.8px;line-height:18.5px;color:#1155cc;text-decoration:underline;white-space:nowrap">Click here<br>to Edit</div>
<div style="left:1637.8px;top:853.8px;width:155.20000000000005px;height:30.0px;background:#fff;border:1.5px solid #ff0000"></div>
<div class="t" style="left:1483px;top:855.8px;height:29.5px;line-height:29.5px;font-weight:bold;font-size:15px;color:#fff">Emerg Contact</div>
<div class="t" style="left:1643px;top:855.8px;height:29.5px;line-height:29.5px;font-size:15.3px;color:#000;letter-spacing:0.2px;-webkit-text-stroke:0.2px #000">9678543212</div>
<div style="left:1637.8px;top:883.3px;width:155.20000000000005px;height:29.5px;background:#fff;border:1.5px solid #ff0000"></div>
<div class="t" style="left:1483px;top:885.3px;height:29.5px;line-height:29.5px;font-weight:bold;font-size:15px;color:#fff">Postal Code</div>
<div class="t" style="left:1643px;top:885.3px;height:29.5px;line-height:29.5px;font-size:15.3px;color:#000;letter-spacing:0.2px;-webkit-text-stroke:0.2px #000">871234</div>
<svg style="left:650px;top:270px;width:230px;height:270px" viewBox="650 270 230 270" width="230" height="270">
<defs>
<linearGradient id="suitm" x1="0" y1="0" x2="1" y2="0">
<stop offset="0" stop-color="#333"/><stop offset="0.1" stop-color="#5e5e5e"/><stop offset="0.28" stop-color="#444"/><stop offset="0.5" stop-color="#303030"/><stop offset="0.72" stop-color="#444"/><stop offset="0.9" stop-color="#5e5e5e"/><stop offset="1" stop-color="#333"/>
</linearGradient>
<linearGradient id="suitvm" x1="0" y1="0" x2="0" y2="1"><stop offset="0" stop-color="#fff" stop-opacity="0.18"/><stop offset="0.4" stop-color="#fff" stop-opacity="0"/><stop offset="1" stop-color="#000" stop-opacity="0.25"/></linearGradient>
<linearGradient id="skinm" x1="0" y1="0" x2="0" y2="1"><stop offset="0" stop-color="#e3d39c"/><stop offset="0.6" stop-color="#d2bd82"/><stop offset="1" stop-color="#a78d58"/></linearGradient>
<linearGradient id="hairm" x1="0" y1="0" x2="1" y2="0"><stop offset="0" stop-color="#1a1a1a"/><stop offset="0.35" stop-color="#555"/><stop offset="0.5" stop-color="#222"/><stop offset="0.7" stop-color="#4a4a4a"/><stop offset="1" stop-color="#151515"/></linearGradient>
<filter id="blurm"><feGaussianBlur stdDeviation="5"/></filter>
</defs>
<ellipse cx="775" cy="510" rx="90" ry="11" fill="#9a9a9a" opacity="0.55" filter="url(#blurm)"/>
<path d="M681 445 Q680 408 708 399 L742 390 L782 390 L816 399 Q843 408 842 445 L842 494 Q842 506 818 507 L706 507 Q681 506 681 494 Z" fill="url(#suitm)"/>
<path d="M681 445 Q680 408 708 399 L742 390 L782 390 L816 399 Q843 408 842 445 L842 494 Q842 506 818 507 L706 507 Q681 506 681 494 Z" fill="url(#suitvm)"/>
<path d="M736 396 L762 412 L788 396 L784 466 L762 496 L740 466 Z" fill="#ececec"/>
<path d="M737 396 L748 412 L756 470 L743 462 Z" fill="#cfcfcf"/>
<path d="M752 417 L771 417 L768 432 L755 432 Z" fill="#2f62ad"/>
<path d="M755 432 L768 432 L774 482 L762 497 L750 482 Z" fill="#3569b8"/>
<clipPath id="tcm"><path d="M755 432 L768 432 L774 482 L762 497 L750 482 Z"/></clipPath><path clip-path="url(#tcm)" d="M745 442 L778 432 M745 452 L778 442 M745 462 L778 452 M745 472 L778 462 M745 482 L778 472 M745 492 L778 482" stroke="#8cb6ee" stroke-width="3"/>
<path d="M736 396 L741 466 L762 498 L723 428 L729 419 L731 400 Z" fill="#1e1e1e"/>
<path d="M788 396 L783 466 L762 498 L801 428 L795 419 L793 400 Z" fill="#1e1e1e"/>
<path d="M723 428 L762 498" stroke="#777" stroke-width="1.2" opacity="0.6"/>
<path d="M801 428 L762 498" stroke="#777" stroke-width="1.2" opacity="0.6"/>
<path d="M748 388 L776 388 L778 408 L762 414 L746 408 Z" fill="#b59a62"/>
<path d="M731 346 Q729 386 747 400 Q762 410 778 400 Q795 386 794 346 Q791 318 762 316 Q734 318 731 346 Z" fill="url(#skinm)"/>
<ellipse cx="729" cy="360" rx="4" ry="9" fill="#c9b27a"/><ellipse cx="796" cy="358" rx="4" ry="9" fill="#c9b27a"/>
<path d="M725 358 Q716 300 762 296 Q806 298 799 356 L795 350 Q795 334 786 322 Q770 333 740 330 Q734 338 731 364 Z" fill="url(#hairm)"/>
<path d="M737 318 Q746 305 760 303" stroke="#e8e8e8" stroke-width="2.2" fill="none" opacity="0.85"/>
<path d="M785 305 Q792 315 792 330" stroke="#dcdcdc" stroke-width="2.2" fill="none" opacity="0.8"/>
<path d="M740 352 Q749 347 758 352 M767 352 Q776 347 785 352" stroke="#3a2c16" stroke-width="2.6" fill="none"/>
<path d="M763 356 L760 379 L767 381" stroke="#8f7646" stroke-width="1.6" fill="none"/>
<path d="M752 390 Q762 393 773 390" stroke="#8f7646" stroke-width="1.6" fill="none"/>
</svg>
<svg style="left:1644px;top:794px;width:50px;height:57px" viewBox="672 290 200 228" width="50" height="57">
<defs>
<linearGradient id="suits" x1="0" y1="0" x2="1" y2="0">
<stop offset="0" stop-color="#333"/><stop offset="0.1" stop-color="#5e5e5e"/><stop offset="0.28" stop-color="#444"/><stop offset="0.5" stop-color="#303030"/><stop offset="0.72" stop-color="#444"/><stop offset="0.9" stop-color="#5e5e5e"/><stop offset="1" stop-color="#333"/>
</linearGradient>
<linearGradient id="suitvs" x1="0" y1="0" x2="0" y2="1"><stop offset="0" stop-color="#fff" stop-opacity="0.18"/><stop offset="0.4" stop-color="#fff" stop-opacity="0"/><stop offset="1" stop-color="#000" stop-opacity="0.25"/></linearGradient>
<linearGradient id="skins" x1="0" y1="0" x2="0" y2="1"><stop offset="0" stop-color="#e3d39c"/><stop offset="0.6" stop-color="#d2bd82"/><stop offset="1" stop-color="#a78d58"/></linearGradient>
<linearGradient id="hairs" x1="0" y1="0" x2="1" y2="0"><stop offset="0" stop-color="#1a1a1a"/><stop offset="0.35" stop-color="#555"/><stop offset="0.5" stop-color="#222"/><stop offset="0.7" stop-color="#4a4a4a"/><stop offset="1" stop-color="#151515"/></linearGradient>
<filter id="blurs"><feGaussianBlur stdDeviation="5"/></filter>
</defs>
<ellipse cx="775" cy="510" rx="90" ry="11" fill="#9a9a9a" opacity="0.55" filter="url(#blurs)"/>
<path d="M681 445 Q680 408 708 399 L742 390 L782 390 L816 399 Q843 408 842 445 L842 494 Q842 506 818 507 L706 507 Q681 506 681 494 Z" fill="url(#suits)"/>
<path d="M681 445 Q680 408 708 399 L742 390 L782 390 L816 399 Q843 408 842 445 L842 494 Q842 506 818 507 L706 507 Q681 506 681 494 Z" fill="url(#suitvs)"/>
<path d="M736 396 L762 412 L788 396 L784 466 L762 496 L740 466 Z" fill="#ececec"/>
<path d="M737 396 L748 412 L756 470 L743 462 Z" fill="#cfcfcf"/>
<path d="M752 417 L771 417 L768 432 L755 432 Z" fill="#2f62ad"/>
<path d="M755 432 L768 432 L774 482 L762 497 L750 482 Z" fill="#3569b8"/>
<clipPath id="tcs"><path d="M755 432 L768 432 L774 482 L762 497 L750 482 Z"/></clipPath><path clip-path="url(#tcs)" d="M745 442 L778 432 M745 452 L778 442 M745 462 L778 452 M745 472 L778 462 M745 482 L778 472 M745 492 L778 482" stroke="#8cb6ee" stroke-width="3"/>
<path d="M736 396 L741 466 L762 498 L723 428 L729 419 L731 400 Z" fill="#1e1e1e"/>
<path d="M788 396 L783 466 L762 498 L801 428 L795 419 L793 400 Z" fill="#1e1e1e"/>
<path d="M723 428 L762 498" stroke="#777" stroke-width="1.2" opacity="0.6"/>
<path d="M801 428 L762 498" stroke="#777" stroke-width="1.2" opacity="0.6"/>
<path d="M748 388 L776 388 L778 408 L762 414 L746 408 Z" fill="#b59a62"/>
<path d="M731 346 Q729 386 747 400 Q762 410 778 400 Q795 386 794 346 Q791 318 762 316 Q734 318 731 346 Z" fill="url(#skins)"/>
<ellipse cx="729" cy="360" rx="4" ry="9" fill="#c9b27a"/><ellipse cx="796" cy="358" rx="4" ry="9" fill="#c9b27a"/>
<path d="M725 358 Q716 300 762 296 Q806 298 799 356 L795 350 Q795 334 786 322 Q770 333 740 330 Q734 338 731 364 Z" fill="url(#hairs)"/>
<path d="M737 318 Q746 305 760 303" stroke="#e8e8e8" stroke-width="2.2" fill="none" opacity="0.85"/>
<path d="M785 305 Q792 315 792 330" stroke="#dcdcdc" stroke-width="2.2" fill="none" opacity="0.8"/>
<path d="M740 352 Q749 347 758 352 M767 352 Q776 347 785 352" stroke="#3a2c16" stroke-width="2.6" fill="none"/>
<path d="M763 356 L760 379 L767 381" stroke="#8f7646" stroke-width="1.6" fill="none"/>
<path d="M752 390 Q762 393 773 390" stroke="#8f7646" stroke-width="1.6" fill="none"/>
</svg>
<svg style="left:0px;top:0px;width:1920px;height:1080px;pointer-events:none" viewBox="0 0 1920 1080"><defs>
<radialGradient id="ufs" cx="0.35" cy="0.35" r="0.75"><stop offset="0" stop-color="#f7e2b0"/><stop offset="0.6" stop-color="#e6bf7c"/><stop offset="1" stop-color="#c8964e"/></radialGradient>
<linearGradient id="ubs" x1="0" y1="0" x2="0.6" y2="1"><stop offset="0" stop-color="#3d86d2"/><stop offset="0.5" stop-color="#1d5aa0"/><stop offset="1" stop-color="#0f2f63"/></linearGradient>
<linearGradient id="uhs" x1="0" y1="0" x2="1" y2="1"><stop offset="0" stop-color="#a88660"/><stop offset="1" stop-color="#6e5236"/></linearGradient>
</defs>
<g transform="translate(98.2,201) scale(0.65)">
<path d="M9 72 Q8 53 24 48 L30 46 L44 47 Q56 50 61 62 L60 80 Q36 84 13 79 Q9 77 9 72 Z" fill="url(#ubs)"/>
<path d="M22 47 Q30 58 43 48 L41 44 L24 44 Z" fill="#f3ddb0"/>
<path d="M16 32 Q15 18 29 17 Q43 17 43 33 Q43 47 30 49 Q17 48 16 32 Z" fill="url(#ufs)"/>
<path d="M14 22 Q17 10 33 9 Q47 10 46 26 Q46 36 42 42 Q42 30 38 24 Q28 24 14 22 Z" fill="url(#uhs)"/>

</g><circle cx="134" cy="236.5" r="6.3" fill="#cfe3f5" stroke="#6f87a3" stroke-width="2.2"/><path d="M138.5 241 L146 251" stroke="#c79a5c" stroke-width="3.2" stroke-linecap="round"/></svg>
<svg style="left:0px;top:0px;width:1920px;height:1080px;pointer-events:none" viewBox="0 0 1920 1080"><defs>
<radialGradient id="ufa" cx="0.35" cy="0.35" r="0.75"><stop offset="0" stop-color="#f7e2b0"/><stop offset="0.6" stop-color="#e6bf7c"/><stop offset="1" stop-color="#c8964e"/></radialGradient>
<linearGradient id="uba" x1="0" y1="0" x2="0.6" y2="1"><stop offset="0" stop-color="#3d86d2"/><stop offset="0.5" stop-color="#1d5aa0"/><stop offset="1" stop-color="#0f2f63"/></linearGradient>
<linearGradient id="uha" x1="0" y1="0" x2="1" y2="1"><stop offset="0" stop-color="#a88660"/><stop offset="1" stop-color="#6e5236"/></linearGradient>
</defs>
<g transform="translate(1190,205) scale(1.0)">
<path d="M9 72 Q8 53 24 48 L30 46 L44 47 Q56 50 61 62 L60 80 Q36 84 13 79 Q9 77 9 72 Z" fill="url(#uba)"/>
<path d="M22 47 Q30 58 43 48 L41 44 L24 44 Z" fill="#f3ddb0"/>
<path d="M16 32 Q15 18 29 17 Q43 17 43 33 Q43 47 30 49 Q17 48 16 32 Z" fill="url(#ufa)"/>
<path d="M14 22 Q17 10 33 9 Q47 10 46 26 Q46 36 42 42 Q42 30 38 24 Q28 24 14 22 Z" fill="url(#uha)"/>
<rect x="54" y="45" width="11" height="36" fill="#3fba3f"/><rect x="41" y="57" width="37" height="10.5" fill="#3fba3f"/><rect x="54" y="45" width="11" height="12" fill="#7cc87a"/><rect x="41" y="57" width="13" height="10.5" fill="#66c05e"/>
</g></svg>
<svg style="left:0px;top:0px;width:1920px;height:1080px;pointer-events:none" viewBox="0 0 1920 1080"><defs>
<radialGradient id="ufe" cx="0.35" cy="0.35" r="0.75"><stop offset="0" stop-color="#f7e2b0"/><stop offset="0.6" stop-color="#e6bf7c"/><stop offset="1" stop-color="#c8964e"/></radialGradient>
<linearGradient id="ube" x1="0" y1="0" x2="0.6" y2="1"><stop offset="0" stop-color="#3d86d2"/><stop offset="0.5" stop-color="#1d5aa0"/><stop offset="1" stop-color="#0f2f63"/></linearGradient>
<linearGradient id="uhe" x1="0" y1="0" x2="1" y2="1"><stop offset="0" stop-color="#a88660"/><stop offset="1" stop-color="#6e5236"/></linearGradient>
</defs>
<g transform="translate(902.8,647.7) scale(1.02)">
<path d="M9 72 Q8 53 24 48 L30 46 L44 47 Q56 50 61 62 L60 80 Q36 84 13 79 Q9 77 9 72 Z" fill="url(#ube)"/>
<path d="M22 47 Q30 58 43 48 L41 44 L24 44 Z" fill="#f3ddb0"/>
<path d="M16 32 Q15 18 29 17 Q43 17 43 33 Q43 47 30 49 Q17 48 16 32 Z" fill="url(#ufe)"/>
<path d="M14 22 Q17 10 33 9 Q47 10 46 26 Q46 36 42 42 Q42 30 38 24 Q28 24 14 22 Z" fill="url(#uhe)"/>

</g><path d="M948 727 L951 713 L975 692 L983 700 L960 721 Z" fill="#eec443" stroke="#b99022" stroke-width="0.8"/><path d="M975 692 L979 688 L987 696 L983 700 Z" fill="#e07070"/><path d="M948 727 L951 713 L960 721 Z" fill="#e9d2a0"/></svg>
<svg style="left:668px;top:120px;width:92px;height:76px" viewBox="0 0 92 76" width="92" height="76"><defs>
<linearGradient id="pg1" x1="0" y1="0" x2="1" y2="1"><stop offset="0" stop-color="#9a9a9a"/><stop offset="1" stop-color="#5e5e5e"/></linearGradient>
<linearGradient id="pb1" x1="0" y1="0" x2="1" y2="1"><stop offset="0" stop-color="#a9d0f0"/><stop offset="1" stop-color="#5c9ad6"/></linearGradient>
<filter id="pblur"><feGaussianBlur stdDeviation="0.5"/></filter>
</defs>
<g filter="url(#pblur)">
<path d="M6 52 Q6 36 18 33 L34 33 Q40 36 40 46 L40 58 L8 58 Q6 56 6 52 Z" fill="url(#pg1)"/>
<path d="M20 33 L26 38 L31 33 L30 52 L25 55 L21 52 Z" fill="#eeeeee"/>
<path d="M23.5 37 L27.5 37 L28.5 50 L26 53 L23 50 Z" fill="#e0523a"/>
<ellipse cx="25.5" cy="23" rx="9.5" ry="12" fill="#8e4f25"/>
<path d="M15 22 Q14 5 26 5 Q37 5 36 22 Q33 13 26 13 Q19 13 15 22 Z" fill="#1c1c1c"/>
<path d="M56 56 Q56 42 66 40 L78 40 Q87 43 87 56 L87 64 L57 64 Z" fill="url(#pg1)"/>
<path d="M64 40 L70 52 L76 40 L74 60 L70 62 L66 60 Z" fill="#e8c0c0"/>
<path d="M56 30 Q54 10 68 10 Q82 10 80 30 L80 38 L75 38 L75 28 L61 28 L61 38 L56 38 Z" fill="#1e1e1e"/>
<ellipse cx="68" cy="29" rx="8.5" ry="11" fill="#efa030"/>
<path d="M65 38 L71 38 L72 56 L68 58 L64 56 Z" fill="#efa030"/>
<path d="M56 30 Q56 12 68 12 Q80 12 80 30 Q76 18 68 18 Q60 18 56 30 Z" fill="#1e1e1e"/>
<path d="M23 60 Q23 44 37 43 L50 43 Q62 45 62 60 L62 70 L24 70 Z" fill="url(#pb1)"/>
<path d="M39.5 47 L46.5 47 L47.5 70 L38.5 70 Z" fill="#1f8f3a"/>
<ellipse cx="43" cy="33" rx="10.5" ry="12.5" fill="#f2c98a"/>
<path d="M32 31 Q31 16 43 16 Q55 16 54 31 Q51 22 43 22 Q35 22 32 31 Z" fill="#b0602a"/>
</g></svg>
<svg style="left:786px;top:136px;width:28px;height:28px" viewBox="0 0 28 28" width="28" height="28"><path d="M14 1 L26 7.5 V20.5 L14 27 L2 20.5 V7.5 Z" fill="#e07a7a" stroke="#6b3f8c" stroke-width="2"/><path d="M2 7.5 L14 14 L26 7.5 M14 14 V27" stroke="#6b3f8c" stroke-width="1.3" fill="none"/><path d="M14 1 V14" stroke="#f0b0b0" stroke-width="1"/></svg>
<div class="t" style="left:766px;top:159px;height:27px;line-height:27px;font-size:25px;color:#4d3878;letter-spacing:-1.2px;transform:scaleX(0.815);transform-origin:left;-webkit-text-stroke:0.5px #4d3878">SpaceCube</div>
<div class="t" style="left:821px;top:184px;height:6px;line-height:6px;font-size:5.5px;color:#dca0a0;letter-spacing:1.3px">architects</div>
<svg style="left:1118px;top:688px;width:41px;height:35px" viewBox="0 0 41 35" width="41" height="35"><path d="M8 14 Q22 2 32 10 Q40 18 34 30" stroke="#3a7bd5" stroke-width="6" fill="none" stroke-linecap="round"/><path d="M0 14 L14 3 L16 22 Z" fill="#3a7bd5"/></svg>
<svg style="left:1172px;top:688px;width:36px;height:35px" viewBox="0 0 36 35" width="36" height="35"><rect x="0" y="0" width="36" height="35" rx="4" fill="#2ea52e"/><rect x="5" y="3" width="26" height="14" fill="#cfe8cf"/><path d="M8 7 H28 M8 11 H28" stroke="#8fbf8f" stroke-width="1.5"/><rect x="9" y="22" width="18" height="13" fill="#d8e8d8"/><rect x="13" y="25" width="5" height="7" fill="#2ea52e"/></svg>
</body></html>
